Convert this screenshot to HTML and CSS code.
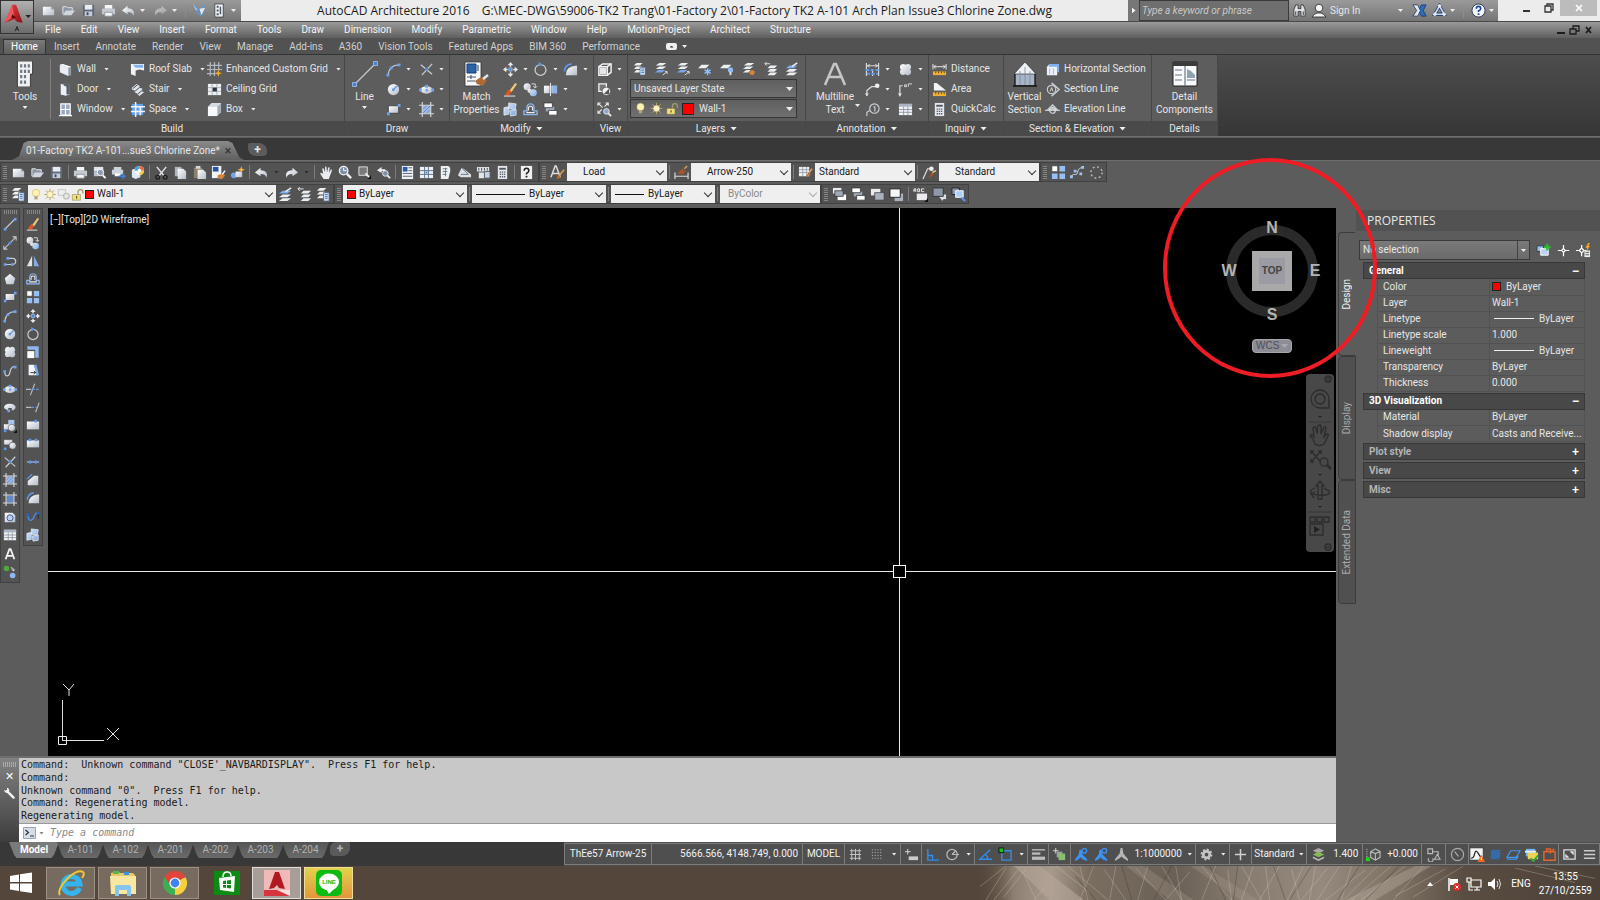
FILE: index.html
```html
<!DOCTYPE html>
<html lang="en">
<head>
<meta charset="utf-8">
<title>AutoCAD Architecture 2016</title>
<link rel="stylesheet" href="styles.css">
</head>
<body>
<svg class="defs" aria-hidden="true">
<defs>
<linearGradient id="gl" x1="0" y1="0" x2="1" y2="1"><stop offset="0" stop-color="#fff"/><stop offset="1" stop-color="#b4bcc8"/></linearGradient>
<linearGradient id="gb" x1="0" y1="0" x2="1" y2="1"><stop offset="0" stop-color="#dbe9fb"/><stop offset="1" stop-color="#7fa9e2"/></linearGradient>
<linearGradient id="gr" x1="0" y1="0" x2="1" y2="1"><stop offset="0" stop-color="#f0444a"/><stop offset="1" stop-color="#8c0d12"/></linearGradient>
</defs>
<symbol id="new" viewBox="0 0 16 16"><path d="M2 4h9l3 3v6H2z" fill="url(#gl)"/><path d="M11 4v3h3z" fill="#8d939b"/></symbol>
<symbol id="open" viewBox="0 0 16 16"><path d="M2 12V4h4l1 1h5v3" fill="#8b95a3" stroke="#e4e8ee"/><path d="M2 13l3-5h10l-4 5z" fill="#cfd6e0"/></symbol>
<symbol id="save" viewBox="0 0 16 16"><path d="M2 2h12v12H2z" fill="#5d6a7c"/><path d="M4 2h8v5H4z" fill="#e9edf2"/><path d="M4 9h8v5H4z" fill="#c5ccd6"/><path d="M6 10h2v3H6z" fill="#3c4656"/></symbol>
<symbol id="print" viewBox="0 0 16 16"><path d="M4 2h8v4H4zM4 10h8v4H4z" fill="#f4f6f8"/><path d="M1 6h14v6H1z" fill="#c3c9d1"/><path d="M4 10h8v4H4z" fill="#f4f6f8" stroke="#6b717a" stroke-width=".6"/></symbol>
<symbol id="preview" viewBox="0 0 16 16"><path d="M2 2h10v5H2z" fill="#dfe4ea"/><path d="M2 7h5v5H2z" fill="#b9c1cc"/><circle cx="9" cy="8" r="3.500" fill="#8fa0b5" stroke="#fff"/><path d="M11.500 11l3 3" stroke="#fff" stroke-width="2"/></symbol>
<symbol id="publish" viewBox="0 0 16 16"><path d="M3 2h8v3H3zM1 5h12v5H1z" fill="#cdd3da"/><path d="M4 9h6v3H4z" fill="#fff"/><path d="M8 12h7m-3-2.500l3 2.500-3 2.500" stroke="#3f7ddc" stroke-width="1.500" fill="none"/></symbol>
<symbol id="threed" viewBox="0 0 16 16"><path d="M2 5l6-2 3 2v8l-5 2-4-2z" fill="#dfe7f0"/><circle cx="10" cy="6" r="5" fill="#f5f7fa"/><path d="M10 1a5 5 0 0 1 5 5h-5z" fill="#e96a3c"/><path d="M15 6a5 5 0 0 1-5 5V6z" fill="#f4c542"/><path d="M5 6a5 5 0 0 1 5-5v5z" fill="#48a0dc"/><circle cx="10" cy="6" r="2" fill="#fff"/></symbol>
<symbol id="cut" viewBox="0 0 16 16"><path d="M3 2l8 10M13 2L5 12" stroke="#dfe3e8" stroke-width="1.500"/><circle cx="4" cy="13" r="2" fill="none" stroke="#1c1c1c" stroke-width="1.400"/><circle cx="12" cy="13" r="2" fill="none" stroke="#1c1c1c" stroke-width="1.400"/></symbol>
<symbol id="copy" viewBox="0 0 16 16"><path d="M2 2h7v10H2z" fill="#aeb5bf"/><path d="M5 4h6l3 3v8H5z" fill="url(#gl)"/></symbol>
<symbol id="paste" viewBox="0 0 16 16"><path d="M2 3h9v11H2z" fill="#8d806d"/><path d="M4 1h5v3H4z" fill="#d4d7db"/><path d="M6 5h6l3 3v7H6z" fill="url(#gl)"/></symbol>
<symbol id="matchs" viewBox="0 0 16 16"><path d="M1 1h10v13H1z" fill="#f2f5f8"/><path d="M2 2h6v5H2z" fill="#28559c"/><path d="M7 11l5-2 3 2-3 4-5-1z" fill="#d9823a"/><path d="M12 10l3-4" stroke="#fff" stroke-width="1.500"/></symbol>
<symbol id="block" viewBox="0 0 16 16"><circle cx="4" cy="11" r="3" fill="#76a4e4"/><path d="M6 7h7v6H6z" fill="url(#gl)"/><path d="M12 1l1 3 3 1-3 1-1 3-1-3-3-1 3-1z" fill="#f6b23c"/></symbol>
<symbol id="undo" viewBox="0 0 16 16"><path d="M7 3L1 8l6 4V9.500c4 0 6 1.500 6 4 2-3 1-8-6-8z" fill="url(#gl)"/></symbol>
<symbol id="redo" viewBox="0 0 16 16"><path d="M9 3l6 5-6 4V9.500c-4 0-6 1.500-6 4-2-3-1-8 6-8z" fill="url(#gl)"/></symbol>
<symbol id="pan" viewBox="0 0 16 16"><path d="M5 15C3 12 1 9 1.500 8.500 2.500 8 4 9 4.500 10L3.500 4c1-1 1.500 0 2 1L6.500 8 6.500 2c1-1 1.500 0 1.600 1L8.500 8 10 2.500c1-.6 1.500.2 1.300 1.200L10.500 8.500 12.500 5c1-.4 1.500.4 1.200 1.200L11.500 12l-1 3z" fill="#e9edf1"/></symbol>
<symbol id="zoom" viewBox="0 0 16 16"><circle cx="6" cy="6" r="4.500" fill="#7d8fa6" stroke="#eef1f4" stroke-width="1.500"/><path d="M6 3v3h3" stroke="#fff" fill="none"/><path d="M9.500 9.500L14 14" stroke="#eef1f4" stroke-width="2.500"/></symbol>
<symbol id="zoomwin" viewBox="0 0 16 16"><path d="M2 2h9v9H2z" fill="#7a7a7a" stroke="#dde1e6"/><path d="M9 9l5 5" stroke="#eee" stroke-width="2"/><path d="M15 11v4h-4z" fill="#111"/></symbol>
<symbol id="zoomprev" viewBox="0 0 16 16"><path d="M6 2L1 5.500l5 3V6.500h4v-2H6z" fill="#e8ecf0"/><circle cx="10" cy="9" r="3" fill="#7d8fa6" stroke="#eee"/><path d="M12 11l3 3" stroke="#eee" stroke-width="2"/></symbol>
<symbol id="props" viewBox="0 0 16 16"><path d="M2 1h12v14H2z" fill="#f0f3f6"/><path d="M3 2h5v5H3z" fill="#2b5aa6"/><path d="M9 3h4M9 6h4M3 9h10M3 12h10" stroke="#56606d"/></symbol>
<symbol id="proj" viewBox="0 0 16 16"><path d="M3 1h9v14H3z" fill="#eef1f4" stroke="#333" stroke-width=".8"/><path d="M5 3h2v2H5zM5 7h2v2H5zM5 11h2v2H5z" fill="#4a5666"/><path d="M9 4v8" stroke="#4a5666" stroke-width="1.500"/></symbol>
<symbol id="dc" viewBox="0 0 16 16"><path d="M1 2h14v12H1z" fill="#edf0f4"/><path d="M6 2v12M10 2v12M1 6h14M1 10h14" stroke="#5b6e8c"/><path d="M7 7h2v2H7z" fill="#4b86d8"/></symbol>
<symbol id="pal" viewBox="0 0 16 16"><path d="M3 1h8l2 2v4l-2 8H3z" fill="#eef1f4"/><path d="M5 4h5M5 7h5M5 10h4M8 3v9" stroke="#6b7683"/></symbol>
<symbol id="sheet" viewBox="0 0 16 16"><path d="M1 11l4-8 2 1 8 6v3H4z" fill="#dde1e7"/><path d="M5 3l7 7H4" stroke="#6b7683" fill="none"/></symbol>
<symbol id="markup" viewBox="0 0 16 16"><path d="M1 2h13v5H1zM3 8h6v6H3z" fill="#e2e6eb"/><path d="M3 3v3M6 3v3M9 3v3M12 3v3" stroke="#3d4652"/><path d="M9 7h6v7H9z" fill="#c8d2de" stroke="#55606e"/></symbol>
<symbol id="calc" viewBox="0 0 16 16"><path d="M3 1h10v14H3z" fill="#e4e7eb"/><path d="M4.500 3h7v2h-7z" fill="#4f5966"/><path d="M5 7.500h6M5 10h6M5 12.500h6" stroke="#59636f" stroke-width="1.400" stroke-dasharray="1.500 .8"/></symbol>
<symbol id="help" viewBox="0 0 16 16"><path d="M2 1h12v14H2z" fill="#f2f2f2"/><path d="M5.500 6q0-2.500 2.500-2.500T10.500 6Q10.500 7.300 8 9v1" stroke="#222" stroke-width="1.600" fill="none"/><path d="M7 11.500h2v1.800H7z" fill="#222"/></symbol>
<symbol id="layerp" viewBox="0 0 16 16"><path d="M4 1h7L8 4H1z" fill="#eef0f3"/><path d="M4 5h6L8 8H1z" fill="#eef0f3"/><path d="M4 9h4v3H1z" fill="#eef0f3"/><path d="M8 6h6v9H8z" fill="#cfe0f6" stroke="#4a5a70" stroke-width=".7"/><path d="M9.500 8h3M9.500 10h3M9.500 12h3" stroke="#3f78c8"/></symbol>
<symbol id="layb" viewBox="0 0 16 16"><path d="M6 1h8l-4 3H2z" fill="#eceff2"/><path d="M6 5h8l-4 3H2z" fill="#eceff2"/><path d="M5 9h8l-4 3H1z" fill="#77a7ea"/><path d="M10 15l5-4m0 0v2.500m0-2.500h-2.500" stroke="#eee" fill="none"/></symbol>
<symbol id="layf" viewBox="0 0 16 16"><path d="M4 3h9l-4 4H0z" fill="#eceff2"/><path d="M11 7v8M7.500 9l7 4M7.500 13l7-4" stroke="#8fc1ff" stroke-width="1.500"/></symbol>
<symbol id="layo" viewBox="0 0 16 16"><path d="M4 3h9l-4 4H0z" fill="#eceff2"/><circle cx="12" cy="9" r="3" fill="#8db9f4"/><path d="M11 11h2v4h-2z" fill="#e3e8ef"/></symbol>
<symbol id="laym" viewBox="0 0 16 16"><path d="M6 1h8l-4 3H2zM5 5h8l-4 3H1zM5 9h5l-3 3H1z" fill="#eceff2"/><path d="M8 11l4-2 3 2-2 4-4-1z" fill="#d9823a"/></symbol>
<symbol id="layv" viewBox="0 0 16 16"><path d="M7 4h8l-3 3H4zM7 8h8l-3 3H4zM7 12h8l-3 3H4z" fill="#eceff2"/><path d="M7 2H1m2-2L1 2l2 2" stroke="#eee" fill="none"/></symbol>
<symbol id="layc" viewBox="0 0 16 16"><path d="M5 4h9l-4 3H1z" fill="#7fb0f0"/><path d="M5 8h9l-4 3H1zM5 12h9l-4 3H1z" fill="#eceff2"/><path d="M8 5l6-4" stroke="#eee" stroke-width="1.500"/></symbol>
<symbol id="bulb" viewBox="0 0 16 16"><circle cx="8" cy="6" r="4.500" fill="#fdf4b4" stroke="#c9a64a" stroke-width=".6"/><path d="M6 10h4v4H6z" fill="#b3a57e"/></symbol>
<symbol id="sun" viewBox="0 0 16 16"><path d="M8 1v14M1 8h14M3 3l10 10M13 3L3 13" stroke="#b8a66c" stroke-width="1.200"/><circle cx="8" cy="8" r="4" fill="#fcf3c2" stroke="#a8924c" stroke-width=".6"/></symbol>
<symbol id="vp" viewBox="0 0 16 16"><path d="M1 2h9v7H1z" fill="none" stroke="#bbb"/><circle cx="11" cy="10" r="3.500" fill="#e6e6e6" stroke="#bbb" stroke-width="1.400"/></symbol>
<symbol id="lock" viewBox="0 0 16 16"><path d="M8 8V5a3 3 0 0 1 6 0v2" fill="none" stroke="#a69a6c" stroke-width="1.500"/><path d="M1 8h10v7H1z" fill="#efe07e" stroke="#7d7340" stroke-width=".6"/><path d="M5.500 10h1.500v3H5.500z" fill="#5d5532"/></symbol>
<symbol id="line" viewBox="0 0 16 16"><path d="M2 14L14 2" stroke="#c6cbd1" stroke-width="1.300"/><path d="M1 12.500h3v3H1zM12.500 1h3v3h-3z" fill="#6ea2ee"/></symbol>
<symbol id="xline" viewBox="0 0 16 16"><path d="M1 15L15 1M1 11v4h4M11 1h4v4" stroke="#c6cbd1" fill="none" stroke-width="1.200"/><path d="M6.500 6.500h3v3h-3z" fill="#4d8df0"/></symbol>
<symbol id="pline" viewBox="0 0 16 16"><path d="M1 12h10a3.500 3.500 0 0 0 0-7H6" stroke="#c6cbd1" fill="none" stroke-width="1.400"/><path d="M1 10.500h3v3H1zM9 10.500h3v3H9zM4 3.500h3v3H4z" fill="#6ea2ee"/></symbol>
<symbol id="poly" viewBox="0 0 16 16"><path d="M8 2l6 5-2 7H4L2 7z" fill="url(#gl)"/></symbol>
<symbol id="rect" viewBox="0 0 16 16"><path d="M2.500 4h11v8h-11z" fill="url(#gl)" stroke="#333" stroke-width=".8"/><path d="M1 11h3v3H1zM12.500 2h3v3h-3z" fill="#6ea2ee"/></symbol>
<symbol id="arc" viewBox="0 0 16 16"><path d="M2 14C3 7 7 3 14 3" stroke="#c6cbd1" fill="none" stroke-width="1.300"/><path d="M.5 12.500h3v3h-3zM4 5h3v3H4zM12.500 1.500h3v3h-3z" fill="#6ea2ee"/></symbol>
<symbol id="circle" viewBox="0 0 16 16"><circle cx="8" cy="8" r="6" fill="url(#gl)"/><path d="M8 8l4-4" stroke="#5c95ea" stroke-width="1.300"/><path d="M6.500 7h2.500v2.500H6.500z" fill="#5c95ea"/></symbol>
<symbol id="cloud" viewBox="0 0 16 16"><path d="M3 3q3-2 5 0 3-2 5 0 2 2.500 0 5 2 3 0 5-2.500 2-5 0-3 1.500-5 0-2-2.500 0-5-2-2.500 0-5z" fill="url(#gl)"/></symbol>
<symbol id="spline" viewBox="0 0 16 16"><path d="M2 9c0 6 5 6 6 0s5-7 6-5" stroke="#c6cbd1" fill="none" stroke-width="1.400"/><path d="M.5 7h3v3h-3zM12.500 2h3v3h-3z" fill="#6ea2ee"/></symbol>
<symbol id="ellipse" viewBox="0 0 16 16"><ellipse cx="8" cy="8.500" rx="6.500" ry="4" fill="url(#gl)"/><path d="M6.500 3h3v3h-3zM0 7h3v3H0zM13 7h3v3h-3zM7 7.500h2.500V10H7z" fill="#6ea2ee"/></symbol>
<symbol id="elarc" viewBox="0 0 16 16"><path d="M2 10a6.500 4 0 1 1 8 2V9H6v3z" fill="url(#gl)"/><path d="M5 11h3v3H5z" fill="#6ea2ee"/></symbol>
<symbol id="insert" viewBox="0 0 16 16"><path d="M6 1h7v9H6z" fill="#a9c6ee"/><path d="M1 6h7v6H1z" fill="url(#gl)"/><circle cx="10" cy="10" r="4" fill="url(#gl)" stroke="#444" stroke-width=".6"/><path d="M1 12h3v3H1z" fill="#5d97ee"/><path d="M16 12v4h-4z" fill="#111"/></symbol>
<symbol id="mkblock" viewBox="0 0 16 16"><path d="M1 3h10v6H1z" fill="url(#gl)" stroke="#444" stroke-width=".6"/><circle cx="11" cy="10" r="4" fill="url(#gl)" stroke="#444" stroke-width=".7"/><path d="M1 12h3v3H1z" fill="#5d97ee"/></symbol>
<symbol id="vstyle" viewBox="0 0 16 16"><path d="M2 2h8v8H2z" fill="#777" stroke="#f2f2f2" stroke-width="1.400"/><circle cx="10" cy="10" r="4.500" fill="#f2f2f2" stroke="#444" stroke-width=".7"/><path d="M7 13l6-6v6z" fill="#555"/></symbol>
<symbol id="point" viewBox="0 0 16 16"><path d="M2 3l12 10M14 2L3 14" stroke="#c6cbd1" stroke-width="1.400"/><path d="M6.500 6h3v3h-3z" fill="#4d8df0"/></symbol>
<symbol id="hatch" viewBox="0 0 16 16"><path d="M4 4h8v8H4z" fill="#9fbdec"/><path d="M4 8l4-4M4 12l8-8M8 12l4-4" stroke="#4c78c0" stroke-width=".8"/><path d="M3.500 0v16M12.500 0v16M0 3.500h16M0 12.500h16" stroke="#d7dbe0" stroke-width="1.200"/></symbol>
<symbol id="grad" viewBox="0 0 16 16"><path d="M4 4h8v8H4z" fill="#6589c4"/><path d="M3.500 0v16M12.500 0v16M0 3.500h16M0 12.500h16" stroke="#d7dbe0" stroke-width="1.200"/></symbol>
<symbol id="region" viewBox="0 0 16 16"><path d="M2 3h9l3 3v8H2z" fill="url(#gl)"/><circle cx="8" cy="9" r="3.500" fill="#b7d1f6" stroke="#33528a"/></symbol>
<symbol id="table" viewBox="0 0 16 16"><path d="M1 2h14v12H1z" fill="#f0f2f5"/><path d="M1 2h14v3H1z" fill="#aab4c2"/><path d="M1 8h14M1 11h14M6 5v9M10.500 5v9" stroke="#7d8794" stroke-width=".8"/></symbol>
<symbol id="bigA" viewBox="0 0 16 16"><path d="M3 14L7.300 2.500h1.400L13 14M5 10h6" fill="none" stroke="#f4f4f4" stroke-width="2"/></symbol>
<symbol id="addsel" viewBox="0 0 16 16"><circle cx="4" cy="4" r="3.200" fill="#4fa83b"/><circle cx="11" cy="12" r="3.200" fill="#8cb8f4"/><path d="M9 3q3 0 3 3m-2-1l2 2 1-2" stroke="#eee" fill="none"/></symbol>
<symbol id="erase" viewBox="0 0 16 16"><path d="M7 9l6-8 2 1-6 9z" fill="#f0c67a"/><path d="M3 12l3-4 3 2-2 4-4 1z" fill="#e0561b"/><path d="M1 15h12" stroke="#eee"/></symbol>
<symbol id="copyo" viewBox="0 0 16 16"><circle cx="4.500" cy="5" r="3.800" fill="url(#gl)"/><circle cx="11" cy="11.500" r="3.800" fill="url(#gb)"/><circle cx="7" cy="9.500" r="2.200" fill="url(#gl)"/><path d="M9 2h4v4m-2-1.500l2 2 2-2" stroke="#ddd" fill="none"/></symbol>
<symbol id="mirror" viewBox="0 0 16 16"><path d="M7 2v12H1z" fill="#e0e4ea"/><path d="M9 2v12h6z" fill="#86abe0"/></symbol>
<symbol id="offset" viewBox="0 0 16 16"><path d="M1 13.500h14v-4h-3.500Q13 2 8 2T4.500 9.500H1z" fill="none" stroke="#8db7f4" stroke-width="1.400"/><path d="M3.500 11.300h9M6 9Q5 4.500 8 4.500T10 9" fill="none" stroke="#eee" stroke-width="1.200"/></symbol>
<symbol id="array" viewBox="0 0 16 16"><path d="M1 1h6v6H1z" fill="#fff" stroke="#444" stroke-width=".6"/><path d="M9 1h6v6H9zM1 9h6v6H1zM9 9h6v6H9z" fill="#98bff5"/></symbol>
<symbol id="move" viewBox="0 0 16 16"><path d="M8 0l3 3.500H5zM8 16l3-3.500H5zM0 8l3.500-3v6zM16 8l-3.500-3v6z" fill="#e6e9ed"/><path d="M6.300 6.300h3.400v3.400H6.300z" fill="#3f86ee" stroke="#cfe0fa" stroke-width=".6"/><path d="M8 3v2M8 11v2M3 8h2M11 8h2" stroke="#e6e9ed" stroke-width="1.600"/></symbol>
<symbol id="rotate" viewBox="0 0 16 16"><circle cx="8" cy="8.500" r="5.800" fill="none" stroke="#c6cbd1" stroke-width="1.400"/><path d="M6 0l4 2.500L6 5z" fill="#5c97f0"/></symbol>
<symbol id="scale" viewBox="0 0 16 16"><path d="M1.500 1.500h13v13h-4v-9h-9z" fill="#8fb6ee"/><path d="M1.500 7h8v8h-8z" fill="#fff"/></symbol>
<symbol id="stretch" viewBox="0 0 16 16"><path d="M3 2h6l4 12H3z" fill="#f1f4f8"/><path d="M9 2h3l3 12h-3z" fill="#79a6e6"/><path d="M5 11h6m-2-2l2 2-2 2" stroke="#222" fill="none"/></symbol>
<symbol id="trim" viewBox="0 0 16 16"><path d="M0 8.500h6M10 2L5 15" stroke="#b6bcc4" stroke-width="1.300"/><path d="M7 8.500h9" stroke="#5f98f0" stroke-width="1.300" stroke-dasharray="3 1.500"/></symbol>
<symbol id="extend" viewBox="0 0 16 16"><path d="M0 8.500h6M15 3l-4 11" stroke="#b6bcc4" stroke-width="1.300"/><path d="M6 8.500h6" stroke="#5f98f0" stroke-width="1.300" stroke-dasharray="3 1.500"/></symbol>
<symbol id="break1" viewBox="0 0 16 16"><path d="M1 4h14v9H1z" fill="url(#gl)"/><path d="M9.500 2h3v3h-3z" fill="#5f98f0"/></symbol>
<symbol id="break2" viewBox="0 0 16 16"><path d="M1 5h14v8H1z" fill="url(#gl)"/><path d="M3 3h3v3H3zM10 3h3v3h-3z" fill="#5f98f0"/></symbol>
<symbol id="join" viewBox="0 0 16 16"><path d="M1 8h14" stroke="#b6bcc4" stroke-width="1.300"/><path d="M4 5.500L8 8l-4 2.500zM12 5.500L8 8l4 2.500z" fill="#5f98f0"/></symbol>
<symbol id="chamfer" viewBox="0 0 16 16"><path d="M2 9l7-6h5v11H2z" fill="url(#gl)"/><path d="M1 7l6-5.500" stroke="#5f98f0" stroke-width="1.500"/></symbol>
<symbol id="fillet" viewBox="0 0 16 16"><path d="M3 14q0-9 10-10h2v10z" fill="url(#gl)"/><path d="M1.500 10Q2 3 9 2" stroke="#5f98f0" stroke-width="1.700" fill="none"/></symbol>
<symbol id="blend" viewBox="0 0 16 16"><path d="M2 6c1 8 5 7 7 2s3-5 6-4" stroke="#4b8df0" fill="none" stroke-width="1.500"/><path d="M.5 4h3v3h-3zM12.500 2h3v3h-3z" fill="#2a5fc0"/><path d="M14 5v5" stroke="#223"/></symbol>
<symbol id="explode" viewBox="0 0 16 16"><path d="M6 1l8 1-1 6-7-1zM1 6l5-1v8l-5 1zM7 9l7-1v6l-6 1z" fill="url(#gb)" stroke="#e8edf4" stroke-width=".8"/></symbol>
<symbol id="align" viewBox="0 0 16 16"><path d="M1 4h6v8H1zM9 4h6v8H9z" fill="url(#gl)"/><path d="M10 4h5v8h-5z" fill="#8bb3ee"/><path d="M8 1v14" stroke="#eee"/></symbol>
<symbol id="order1" viewBox="0 0 16 16"><path d="M1 1h9v6H1z" fill="#e9ebee"/><path d="M6 8h9v6H6z" fill="#fff"/><path d="M3 4h9v6H3z" fill="#9fa9b8" stroke="#333" stroke-width=".8"/></symbol>
<symbol id="order2" viewBox="0 0 16 16"><path d="M3 5h9v5H3z" fill="#9fa9b8"/><path d="M1 1h9v5H1zM6 9h9v5H6z" fill="#fff" stroke="#333" stroke-width=".8"/></symbol>
<symbol id="order3" viewBox="0 0 16 16"><path d="M1 2h10v7H1z" fill="#e9ebee"/><path d="M5 6h10v8H5z" fill="#a9b2be" stroke="#444" stroke-width=".8"/></symbol>
<symbol id="order4" viewBox="0 0 16 16"><path d="M6 7h9v8H6z" fill="#a9b2be"/><path d="M1 2h11v9H1z" fill="#f5f6f8" stroke="#222"/></symbol>
<symbol id="abc" viewBox="0 0 16 16"><path d="M4 7h11v7H4z" fill="#e9ebee"/><path d="M1 5V2h2v3M1 4h2M5 5V2h2v3zM9 2h3M9 2v3h3" stroke="#eee" fill="none"/><path d="M16 12v4h-4z" fill="#111"/></symbol>
<symbol id="order5" viewBox="0 0 16 16"><path d="M6 8h9v5q-4-1-4 2z" fill="#dde0e4"/><path d="M1 1h11v9H1z" fill="#8e98a8" stroke="#333"/></symbol>
<symbol id="order6" viewBox="0 0 16 16"><path d="M1 1h8v7H1z" fill="#8e98a8" stroke="#222"/><path d="M5 4h8v7H5z" fill="#a8d1f7" stroke="#fff"/><path d="M11 11l4 4" stroke="#5f98f0" stroke-width="2"/></symbol>
<symbol id="wall" viewBox="0 0 16 16"><path d="M2 3l3-1 9 3v9l-3 1-9-4z" fill="#8e99a7"/><path d="M2 3l9 3v9l-9-4z" fill="#e9edf2"/><path d="M2 3l3-1 9 3-3 1z" fill="#fff"/></symbol>
<symbol id="door" viewBox="0 0 16 16"><path d="M3 2h9v12H3z" fill="#a8b6c8"/><path d="M6 2h6v11H6z" fill="#59616c"/><path d="M3 2l6 3v10l-6-2z" fill="#edf1f5"/></symbol>
<symbol id="window" viewBox="0 0 16 16"><path d="M3 2h10v12H3z" fill="#97a7bd" stroke="#fff" stroke-width="1.300"/><path d="M8 2v12M3 8h10M1 14.500h14" stroke="#fff" stroke-width="1.300"/></symbol>
<symbol id="roof" viewBox="0 0 16 16"><path d="M1 2h14v7l-5-1-4 1v6l-5-2z" fill="#f0f3f7"/><path d="M3 3h11v3H6z" fill="#80b0f0"/></symbol>
<symbol id="stair" viewBox="0 0 16 16"><path d="M2 6l5-4 3 2v2l3 1v3l2 1-5 4-3-3-2-1V9L2 8z" fill="#dfe4ea"/><path d="M3 7l5-4M5 10l5-4M8 13l5-4" stroke="#3d4550"/></symbol>
<symbol id="space" viewBox="0 0 16 16"><path d="M2 2h12v12H2z" fill="#62a1ee"/><path d="M6 0v16M1 5h15M1 10h15M11 5v9" stroke="#f0f4f8" stroke-width="1.600"/></symbol>
<symbol id="ecg" viewBox="0 0 16 16"><path d="M3.500 0v15M8 0v15M12.500 0v9M0 3.500h16M0 8h16M0 12.500h9" stroke="#b3b8bf" stroke-width="1.300"/><path d="M12 8l1 3 3 1-3 1-1 3-1-3-3-1 3-1z" fill="#f7a823"/></symbol>
<symbol id="ceil" viewBox="0 0 16 16"><path d="M1 2h14v12H1z" fill="#eef0f3"/><path d="M5.500 2v12M10.500 2v12M1 6h14M1 10h14" stroke="#aab0b8"/><path d="M6 6h4.500v4H6z" fill="#2e343c"/></symbol>
<symbol id="box" viewBox="0 0 16 16"><path d="M1 5l4-4h10v10l-4 4H1z" fill="#a5afbb"/><path d="M1 5l4-4h10l-4 4z" fill="#d6dce3"/><path d="M1 5h10v10H1z" fill="#f7f9fa"/></symbol>
<symbol id="boxv" viewBox="0 0 16 16"><path d="M2 5l4-3h9v9l-4 3H2z" fill="#555" stroke="#f2f2f2" stroke-width="1.600"/><path d="M2 5h9v9M11 5l4-3" fill="none" stroke="#f2f2f2" stroke-width="1.600"/><path d="M3 6h7v7H3z" fill="#e3e6ea"/></symbol>
<symbol id="zext" viewBox="0 0 16 16"><path d="M1 1l5 5M12 1L8 5M1 12l4-4M1 4V1h3M9 1h3v3M1 9v3h3" stroke="#e6e6e6" fill="none" stroke-width="1.200"/><circle cx="10" cy="10" r="3" fill="#8fa8c8" stroke="#e6e6e6"/><path d="M12 12l3 3" stroke="#e6e6e6" stroke-width="2"/></symbol>
<symbol id="dim" viewBox="0 0 16 16"><path d="M1.500 1v14M14.500 1v14M8 9v6" stroke="#ddd" stroke-width="1.200"/><path d="M2 4h12M5 2.500L2.500 4 5 5.500M11 2.500L13.500 4 11 5.500" stroke="#ddd" fill="none"/><path d="M1 8.500h14M2 12.500h12" stroke="#5c97f0" stroke-width="2" stroke-dasharray="3.500 1.500"/></symbol>
<symbol id="leader" viewBox="0 0 16 16"><path d="M2 15V9l5-4h4" stroke="#d8dbe0" fill="none" stroke-width="1.300"/><circle cx="13" cy="4" r="2.500" fill="#eee"/><path d="M0 12l2 3.500 2-3.500z" fill="#ddd"/></symbol>
<symbol id="leader2" viewBox="0 0 16 16"><path d="M2 15V4h3" stroke="#d8dbe0" fill="none" stroke-width="1.300"/><path d="M7 5V3h2v2zM11 5V2h4" stroke="#ddd" fill="none"/><path d="M0 12l2 4 2-4z" fill="#ddd"/></symbol>
<symbol id="tag" viewBox="0 0 16 16"><circle cx="10" cy="7" r="5" fill="none" stroke="#cfd3d8" stroke-width="1.200"/><path d="M2 15v-4l3-2M9 5h1.500v5" stroke="#cfd3d8" fill="none" stroke-width="1.200"/></symbol>
<symbol id="dist" viewBox="0 0 16 16"><path d="M1 2v6M15 2v6M2 5h12M4 3L2 5l2 2M12 3l2 2-2 2" stroke="#eee" fill="none"/><path d="M1 10h14v4H1z" fill="#f2b334"/><path d="M4 10v2M7 10v2M10 10v2M13 10v2" stroke="#554215"/></symbol>
<symbol id="area" viewBox="0 0 16 16"><path d="M2 1h3l10 8H2z" fill="#f1f4f6"/><path d="M1 11h14v4H1z" fill="#f2b334"/><path d="M4 11v2M7 11v2M10 11v2M13 11v2" stroke="#554215"/></symbol>
<symbol id="hsec" viewBox="0 0 16 16"><path d="M2 5l3-3h10l-2 3v9H2z" fill="#edf1f5"/><path d="M5 2h10v9h-2V5H4z" fill="#7fb1f2"/><path d="M5 7v6M9 7v6" stroke="#9db9dd"/></symbol>
<symbol id="secl" viewBox="0 0 16 16"><circle cx="7" cy="8" r="4.500" fill="none" stroke="#c6cbd1" stroke-width="1.300"/><path d="M7 1l8 7-8 7" fill="none" stroke="#c6cbd1" stroke-width="1.600"/><path d="M5.500 10L7 6l1.500 4" stroke="#ddd" fill="none"/></symbol>
<symbol id="elvl" viewBox="0 0 16 16"><path d="M0 9h16M8 3l5 5H3z" stroke="#c6cbd1" fill="#888" stroke-width="1.400"/><circle cx="8" cy="9" r="3" fill="none" stroke="#ddd" stroke-width="1.200"/></symbol>
<symbol id="txst" viewBox="0 0 16 16"><path d="M1 13L5.500 1h1L11 13M3 9h6" fill="none" stroke="#ddd" stroke-width="1.600"/><path d="M10 11l5-6" stroke="#e9a24a" stroke-width="1.500"/><path d="M7 15l2-5 3 3z" fill="#c5702e"/></symbol>
<symbol id="dimst" viewBox="0 0 16 16"><path d="M1 8v7M15 8v7M1 12h14" stroke="#ddd" stroke-width="1.200"/><path d="M3 9l6-5 4 3-4 3z" fill="#a4552a"/><path d="M11 4l3-3" stroke="#d9a066" stroke-width="1.500"/></symbol>
<symbol id="tbst" viewBox="0 0 16 16"><path d="M1 2h11v10H1z" fill="#eee"/><path d="M1 5h11M1 8h11M5 2v10M9 2v10" stroke="#8d97a4" stroke-width=".8"/><path d="M8 13l3-5 3 2z" fill="#c5702e"/><path d="M12 8l3-4" stroke="#e9a24a" stroke-width="1.500"/></symbol>
<symbol id="mlst" viewBox="0 0 16 16"><path d="M1 15l5-11h3" fill="none" stroke="#ddd" stroke-width="1.300"/><circle cx="10" cy="4" r="2.500" fill="#eee"/><path d="M7 14l3-6 3 2z" fill="#a4552a"/><path d="M11 8l4-2" stroke="#f1c285" stroke-width="1.500"/></symbol>
<symbol id="conv" viewBox="0 0 16 16"><path d="M2 13c0-6 5 0 6-5s3-5 6-5" stroke="#ddd" fill="none"/><path d="M0 11h3v3H0zM12 1h3v3h-3zM10 8h3v3h-3zM4 5h3v3H4z" fill="#9cc0f4"/></symbol>
<symbol id="dots" viewBox="0 0 16 16"><circle cx="8" cy="8" r="6" fill="none" stroke="#bbb" stroke-width="1.500" stroke-dasharray="2 2.700"/></symbol>
<symbol id="ws" viewBox="0 0 16 16"><path d="M2 3l6 5 6-6M4 8l5 5 4-5" stroke="#5599dd" fill="none" stroke-width="1.500"/><path d="M8 6l2 7 4-8z" fill="#dfe6ee"/><path d="M1 1l5 7-2-1z" fill="#eee"/></symbol>
<symbol id="bldg" viewBox="0 0 16 24"><path d="M1 0h14v12h-2v12H1z" fill="#f0f2f4" stroke="#303030" stroke-width=".8"/><path d="M3.500 3h2v3h-2zM7 3h2v3H7zM10.500 3h2v3h-2zM3.500 8h2v3h-2zM7 8h2v3H7zM10.500 8h2v3h-2zM3.500 13h2v3h-2zM7 13h2v3H7zM3.500 18h2v3h-2zM7 18h2v3H7z" fill="#6f7780"/></symbol>
<symbol id="bigline" viewBox="0 0 26 26"><path d="M2 24L24 2" stroke="#c2c6cb" stroke-width="1.200"/><path d="M.5 21.500h4v4h-4zM21.500.5h4v4h-4z" fill="#4b80cc" stroke="#9cc1f5" stroke-width=".8"/></symbol>
<symbol id="match" viewBox="0 0 26 26"><path d="M1 1h16v24H1z" fill="#f7f8fa" stroke="#333" stroke-width=".8"/><path d="M3 3h9v9H3z" fill="#2a63a8" stroke="#123b70"/><path d="M14 4v6M3 16h9M7 14v4M3 20h8" stroke="#4a5a6c" stroke-width="1.200"/><path d="M11 20l6-4 6 3-4 6-6-2z" fill="#b06a33"/><path d="M19 18l5-4" stroke="#e6e6e6" stroke-width="2.500"/></symbol>
<symbol id="hugeA" viewBox="0 0 26 26"><path d="M3 24L12 3h2l9 21M7 16h12" fill="none" stroke="#c5c5c5" stroke-width="2.600"/></symbol>
<symbol id="house" viewBox="0 0 26 26"><path d="M3 13h20v11H3z" fill="#a7b3c6"/><path d="M13 1l11 12H2z" fill="#eef1f5" stroke="#333" stroke-width=".7"/><path d="M13 6v18M8 10v14M18 10v14" stroke="#7c889b" stroke-width=".8"/><path d="M1 25h24M3 13v12M23 13v12" stroke="#151515" stroke-width="1.300"/></symbol>
<symbol id="detail" viewBox="0 0 26 26"><path d="M1 1h24v24H1z" fill="#f8f9fa" stroke="#222"/><path d="M1 1h24v4H1z" fill="#3b3b3b"/><path d="M13 5v20M3 9h7M3 14h7M3 19h7M15 19h8" stroke="#6a7888" stroke-width="1.200"/><path d="M15 8l4 2 4 4v3h-8z" fill="#8fa2b0"/></symbol>
<symbol id="bino" viewBox="0 0 16 16"><path d="M2 7l2-5h2.500v4h3V2H12l2 5v7H9.500V9h-3v5H2z" fill="#dfe2e6" stroke="#333" stroke-width=".9"/><path d="M4 9v4M12 9v4" stroke="#333"/></symbol>
<symbol id="user" viewBox="0 0 16 16"><circle cx="8" cy="5" r="3.800" fill="#f5f6f8" stroke="#333" stroke-width=".9"/><path d="M1 14q2-3 5-4h4q3 1 5 4z" fill="#f5f6f8" stroke="#333" stroke-width=".9"/></symbol>
<symbol id="exch" viewBox="0 0 16 16"><path d="M15 2h-5L7 8l3 6h5l-3-6z" fill="#2d6cc4" stroke="#1d2f55" stroke-width=".8"/><path d="M1 2h5l3 6-3 6H1l4-6z" fill="#dfe8f5" stroke="#1d2f55" stroke-width=".8"/></symbol>
<symbol id="a360" viewBox="0 0 16 16"><path d="M8 3L3 12h10z" fill="none" stroke="#27406e" stroke-width="3.500"/><path d="M8 3L3 12h10z" fill="none" stroke="#c9d6ea" stroke-width="1.800"/><circle cx="8" cy="3" r="1.800" fill="#e6ecf6"/><circle cx="3" cy="12" r="1.800" fill="#e6ecf6"/><circle cx="13" cy="12" r="1.800" fill="#e6ecf6"/></symbol>
<symbol id="qhelp" viewBox="0 0 16 16"><circle cx="8" cy="8" r="7" fill="#f4f6fa" stroke="#2a3550"/><path d="M5.700 6q0-2.400 2.300-2.400T10.300 6Q10.300 7.300 8 8.600v1" stroke="#1b3f9c" stroke-width="1.700" fill="none"/><path d="M7.100 11h1.900v1.800H7.100z" fill="#1b3f9c"/></symbol>
<symbol id="grid" viewBox="0 0 16 16"><path d="M4 2v12M8 2v12M12 2v12M2 4h12M2 8h12M2 12h12" stroke="#c9c9c9"/></symbol>
<symbol id="snap" viewBox="0 0 16 16"><path d="M2 3h12M2 6h12M2 9h12M2 12h12" stroke="#c9c9c9" stroke-dasharray="1 2"/></symbol>
<symbol id="dyn" viewBox="0 0 16 16"><path d="M1 5h6M4 2v6" stroke="#ddd"/><path d="M5 10h10v4H5z" fill="#ccc"/></symbol>
<symbol id="ortho" viewBox="0 0 16 16"><path d="M3 2v12h12M3 9h5v5" stroke="#2f8cf0" fill="none" stroke-width="1.500"/></symbol>
<symbol id="polar" viewBox="0 0 16 16"><circle cx="7.500" cy="8" r="5.500" fill="none" stroke="#bbb" stroke-width="1.300"/><path d="M7.500 8H15M7.500 8l4-4" stroke="#bbb" stroke-width="1.300"/></symbol>
<symbol id="otrack" viewBox="0 0 16 16"><path d="M13 3L2 13h13M8 8q3 2 2 5" stroke="#2f8cf0" fill="none" stroke-width="1.500"/></symbol>
<symbol id="osnap" viewBox="0 0 16 16"><path d="M4 4h10v10H4z" stroke="#2f8cf0" fill="none" stroke-width="1.500"/><path d="M1 1h5v5H1z" fill="#19c319" stroke="#111"/></symbol>
<symbol id="lwt" viewBox="0 0 16 16"><path d="M1 3h14" stroke="#bbb" stroke-width="1.500"/><path d="M1 7h9" stroke="#bbb" stroke-width="2.500"/><path d="M1 12h14" stroke="#bbb" stroke-width="3.500"/></symbol>
<symbol id="selc" viewBox="0 0 16 16"><path d="M1 4h6M4 1v6" stroke="#ddd"/><path d="M5 5h6v6H5z" fill="#a3a3a3"/><path d="M7 7h7v7H7z" fill="#86c06c"/></symbol>
<symbol id="ann" viewBox="0 0 16 16"><path d="M7 1h2l1 6 5 6v2l-5-3-2-2-2 2-5 3v-2l5-6z" fill="currentColor"/></symbol>
<symbol id="annv" viewBox="0 0 16 16"><path d="M6 3h2l1 5 5 5v2l-5-2-2-2-2 2-4 2v-2l4-5z" fill="currentColor"/><circle cx="11" cy="4" r="2.500" fill="none" stroke="currentColor" stroke-width="1.400"/></symbol>
<symbol id="gear" viewBox="0 0 16 16"><circle cx="8" cy="8" r="3.500" fill="none" stroke="#c4c4c4" stroke-width="3"/><circle cx="8" cy="8" r="5.300" fill="none" stroke="#c4c4c4" stroke-width="2" stroke-dasharray="2.100 2"/></symbol>
<symbol id="cross" viewBox="0 0 16 16"><path d="M8 2v12M2 8h12" stroke="#d0d0d0" stroke-width="1.600"/></symbol>
<symbol id="cutp" viewBox="0 0 16 16"><path d="M8 1l6 3-6 3-6-3z" fill="#aaa"/><path d="M8 5l6 3-6 3-6-3z" fill="#86bb54"/><path d="M2 10l6 3 6-3v2l-6 3-6-3z" fill="#bbb"/></symbol>
<symbol id="elev" viewBox="0 0 16 16"><path d="M5 5l5-3 5 3v6l-5 3-5-3zM5 5l5 2 5-2M10 7v7" fill="none" stroke="#bbb" stroke-width="1.200"/><path d="M1 2v9" stroke="#ccc" stroke-dasharray="1 1.500"/><path d="M0 11h4v4H0z" fill="#1bdc1b"/></symbol>
<symbol id="iso" viewBox="0 0 16 16"><path d="M2 2h5v5H2zM3 12a2.500 2.500 0 1 0 4 0M9 13l3-5 3 5zM7 5h6v4" fill="none" stroke="#bbb" stroke-width="1.200"/></symbol>
<symbol id="hw" viewBox="0 0 16 16"><circle cx="8" cy="8" r="6.500" fill="none" stroke="#aaa" stroke-width="1.300"/><path d="M5 5l4 5" stroke="#aaa" stroke-width="1.300"/></symbol>
<symbol id="wave" viewBox="0 0 16 16"><path d="M0 1h14v13H0z" fill="#f4f4f4" stroke="#222" stroke-width=".6"/><path d="M1 12q3 0 4-5t4 0 3 5" stroke="#222" fill="none" stroke-width="1.300"/><path d="M12 8l4 8H8z" fill="#ec6a1c"/><path d="M12 11v3" stroke="#fff"/></symbol>
<symbol id="bluebox" viewBox="0 0 16 16"><path d="M3 3h10v10H3z" fill="#315f98"/><path d="M3 7l4-4M3 10l7-7M3 13L13 3M6 13l7-7M9 13l4-4" stroke="#4488d0" stroke-width=".8"/></symbol>
<symbol id="plane" viewBox="0 0 16 16"><path d="M1 11l4-7h10l-4 7zM1 13h10l2-3" fill="none" stroke="#4296ec" stroke-width="1.300"/></symbol>
<symbol id="trust" viewBox="0 0 16 16"><path d="M2 2h10v8H2z" fill="#7ab4ee"/><path d="M4 6h11v7H4z" fill="#f0d256"/><path d="M1 4h12v2H1z" fill="#eee"/><path d="M7 12l3 3 5-6" fill="none" stroke="#35a83a" stroke-width="2"/></symbol>
<symbol id="opack" viewBox="0 0 16 16"><path d="M2 5h12v9H2zM5 5V2h4v5M10 5l3-3" fill="none" stroke="#e0662a" stroke-width="1.600"/></symbol>
<symbol id="clean" viewBox="0 0 16 16"><path d="M2 3h12v10H2z" fill="none" stroke="#ddd" stroke-width="1.400"/><path d="M9 5h3v3zM4 11V8l3 3z" fill="#ddd" stroke="#ddd"/></symbol>
<symbol id="burger" viewBox="0 0 16 16"><path d="M2 4h12M2 8h12M2 12h12" stroke="#ccc" stroke-width="1.800"/></symbol>
<symbol id="qsel" viewBox="0 0 16 16"><path d="M1 3h7v6H1z" fill="#9dbbe6" stroke="#2c3e5c"/><path d="M5 6h8v7H5z" fill="#b9d2f4" stroke="#fff"/><path d="M12 1v7M8.500 4.500h7" stroke="#28c12c" stroke-width="2.200"/></symbol>
<symbol id="pick" viewBox="0 0 16 16"><path d="M8 2v4M8 10v4M2 8h4M10 8h4" stroke="#fff" stroke-width="1.300"/><path d="M6 8l2-2 2 2-2 2z" fill="none" stroke="#fff" stroke-width="1.300"/></symbol>
<symbol id="pick2" viewBox="0 0 16 16"><path d="M6 2v4M6 10v4M0 8h3M9 8h2" stroke="#fff" stroke-width="1.300"/><path d="M3.500 8L6 5.500 8.500 8 6 10.500z" fill="none" stroke="#fff" stroke-width="1.300"/><path d="M13 0l-3 5h2l-1 4 4-6h-2l2-3z" fill="#f5a623"/><path d="M9 8h6v7H9z" fill="#eee"/><path d="M10 10h4M10 12.500h4" stroke="#555"/></symbol>
<symbol id="wrench" viewBox="0 0 16 16"><path d="M5 5l8 8" stroke="#f2f2f2" stroke-width="3" stroke-linecap="round"/><path d="M1.500 3A3.500 3.500 0 0 0 7 6.500 3.500 3.500 0 0 0 5 1v3l-2 .5z" fill="#f2f2f2"/></symbol>
</svg>

<header class="titlebar">
  <button class="appbtn" aria-label="Application menu"><svg viewBox="0 0 34 34"><path d="M4 23L12 4h4l7 19-6-1-3-3-4 2z" fill="url(#gr)"/><path d="M12 4l2 12-10 7z" fill="#f0555a"/><path d="M12 14l4 4h-5z" fill="#5a0508"/><path d="M26 15h6l-3 3z" fill="#222"/><path d="M15 32l2-5 2 5m-3-2h2" stroke="#222" fill="none"/></svg></button>
  <div class="qat">
    <button class="b" aria-label="New"><svg><use href="#new"/></svg></button>
    <button class="b" aria-label="Open"><svg><use href="#open"/></svg></button>
    <button class="b" aria-label="Save"><svg><use href="#save"/></svg></button>
    <button class="b" aria-label="Plot"><svg><use href="#print"/></svg></button>
    <button class="b" aria-label="Undo"><svg><use href="#undo"/></svg></button><i class="c wide"></i>
    <button class="b dim" aria-label="Redo"><svg><use href="#redo"/></svg></button><i class="c wide"></i>
    <i class="sep"></i>
    <button class="b" aria-label="Workspace"><svg><use href="#ws"/></svg></button>
    <button class="b" aria-label="Project"><svg><use href="#proj"/></svg></button>
    <i class="c wide more"></i>
  </div>
  <h1><span>AutoCAD Architecture 2016</span><span>G:\MEC-DWG\59006-TK2 Trang\01-Factory 2\01-Factory TK2 A-101 Arch Plan Issue3 Chlorine Zone.dwg</span></h1>
  <button class="expand" aria-label="Expand search"><i></i></button>
  <input class="search" aria-label="Search" placeholder="Type a keyword or phrase">
  <div class="info">
    <button class="b" aria-label="Find"><svg><use href="#bino"/></svg></button>
    <button class="signin"><svg><use href="#user"/></svg><span>Sign In</span><i class="c"></i></button>
    <button class="b" aria-label="Exchange"><svg><use href="#exch"/></svg></button>
    <button class="b" aria-label="A360"><svg><use href="#a360"/></svg></button><i class="c wide"></i>
    <i class="sep"></i>
    <button class="b" aria-label="Help"><svg><use href="#qhelp"/></svg></button><i class="c wide"></i>
  </div>
  <div class="winbtns">
    <button aria-label="Minimize"><svg viewBox="0 0 12 12"><path d="M2 8h7v2H2z" fill="#333"/></svg></button>
    <button aria-label="Restore"><svg viewBox="0 0 12 12"><path d="M2 4h6v6H2zM4 4V2h6v6H8" fill="none" stroke="#333" stroke-width="1.300"/></svg></button>
    <button class="x" aria-label="Close"><svg viewBox="0 0 12 12"><path d="M3 3l6 6M9 3L3 9" stroke="#fff" stroke-width="1.600"/></svg></button>
  </div>
</header>

<nav class="menubar">
  <a href="#">File</a><a href="#">Edit</a><a href="#">View</a><a href="#">Insert</a><a href="#">Format</a><a href="#">Tools</a><a href="#">Draw</a><a href="#">Dimension</a><a href="#">Modify</a><a href="#">Parametric</a><a href="#">Window</a><a href="#">Help</a><a href="#">MotionProject</a><a href="#">Architect</a><a href="#">Structure</a>
  <svg class="mdi" viewBox="0 0 40 12"><path d="M2 8h8v2H2z" fill="#1c1c1c"/><path d="M15 5h6v5h-6zM18 5V2h6v5h-3" fill="none" stroke="#1c1c1c" stroke-width="1.300"/><path d="M31 3l5 6M36 3l-5 6" stroke="#1c1c1c" stroke-width="1.800"/></svg>
</nav>

<nav class="tabs">
  <a class="on" href="#">Home</a><a href="#">Insert</a><a href="#">Annotate</a><a href="#">Render</a><a href="#">View</a><a href="#">Manage</a><a href="#">Add-ins</a><a href="#">A360</a><a href="#">Vision Tools</a><a href="#">Featured Apps</a><a href="#">BIM 360</a><a href="#">Performance</a>
  <button class="ribmin" aria-label="Minimize ribbon"><i></i></button><i class="c"></i>
</nav>

<section class="ribbon">
  <div class="panel build">
    <div class="body">
      <button class="big"><svg class="tall"><use href="#bldg"/></svg><span>Tools</span><i class="c"></i></button>
      <i class="vsep"></i>
      <div class="cols">
        <button class="rb"><svg><use href="#wall"/></svg>Wall<i class="c"></i></button>
        <button class="rb"><svg><use href="#roof"/></svg>Roof Slab<i class="c"></i></button>
        <button class="rb"><svg><use href="#ecg"/></svg>Enhanced Custom Grid<i class="c"></i></button>
        <button class="rb"><svg><use href="#door"/></svg>Door<i class="c"></i></button>
        <button class="rb"><svg><use href="#stair"/></svg>Stair<i class="c"></i></button>
        <button class="rb"><svg><use href="#ceil"/></svg>Ceiling Grid</button>
        <button class="rb"><svg><use href="#window"/></svg>Window<i class="c"></i></button>
        <button class="rb"><svg><use href="#space"/></svg>Space<i class="c"></i></button>
        <button class="rb"><svg><use href="#box"/></svg>Box<i class="c"></i></button>
      </div>
    </div>
    <h2>Build</h2>
  </div>
  <div class="panel draw">
    <div class="body">
      <button class="big"><svg><use href="#bigline"/></svg><span>Line</span><i class="c"></i></button>
      <div class="cols">
        <button class="sp" aria-label="Arc"><svg><use href="#arc"/></svg><i class="c"></i></button>
        <button class="sp" aria-label="Point"><svg><use href="#point"/></svg><i class="c"></i></button>
        <button class="sp" aria-label="Circle"><svg><use href="#circle"/></svg><i class="c"></i></button>
        <button class="sp" aria-label="Ellipse"><svg><use href="#ellipse"/></svg><i class="c"></i></button>
        <button class="sp" aria-label="Rectangle"><svg><use href="#rect"/></svg><i class="c"></i></button>
        <button class="sp" aria-label="Hatch"><svg><use href="#hatch"/></svg><i class="c"></i></button>
      </div>
    </div>
    <h2>Draw</h2>
  </div>
  <div class="panel modify">
    <div class="body">
      <button class="big"><svg><use href="#match"/></svg><span>Match<br>Properties</span></button>
      <div class="rows">
        <div class="spread"><button class="sp" aria-label="Move"><svg><use href="#move"/></svg><i class="c"></i></button><button class="sp" aria-label="Rotate"><svg><use href="#rotate"/></svg><i class="c"></i></button><button class="sp" aria-label="Fillet"><svg><use href="#fillet"/></svg><i class="c"></i></button></div>
        <div><button class="sp one" aria-label="Erase"><svg><use href="#erase"/></svg></button><button class="sp one" aria-label="Copy"><svg><use href="#copyo"/></svg></button><button class="sp" aria-label="Align"><svg><use href="#align"/></svg><i class="c"></i></button></div>
        <div><button class="sp one" aria-label="Explode"><svg><use href="#explode"/></svg></button><button class="sp one" aria-label="Offset"><svg><use href="#offset"/></svg></button><button class="sp" aria-label="Draw order"><svg><use href="#order2"/></svg><i class="c"></i></button></div>
      </div>
    </div>
    <h2>Modify<i class="t"></i></h2>
  </div>
  <div class="panel view">
    <div class="body"><div class="rows">
      <button class="sp" aria-label="Views"><svg><use href="#boxv"/></svg><i class="c"></i></button>
      <button class="sp" aria-label="Visual style"><svg><use href="#vstyle"/></svg><i class="c"></i></button>
      <button class="sp" aria-label="Zoom extents"><svg><use href="#zext"/></svg><i class="c"></i></button>
    </div></div>
    <h2>View</h2>
  </div>
  <div class="panel layers">
    <div class="body"><div class="rows">
      <div class="licons">
        <button class="b" aria-label="Layer properties"><svg><use href="#layerp"/></svg></button><button class="b" aria-label="Isolate"><svg><use href="#layb"/></svg></button><button class="b" aria-label="Unisolate"><svg><use href="#layb"/></svg></button><button class="b" aria-label="Freeze"><svg><use href="#layf"/></svg></button><button class="b" aria-label="Off"><svg><use href="#layo"/></svg></button><button class="b" aria-label="Match layer"><svg><use href="#laym"/></svg></button><button class="b" aria-label="Previous"><svg><use href="#layv"/></svg></button><button class="b" aria-label="Make current"><svg><use href="#layc"/></svg></button>
      </div>
      <label class="dk"><select aria-label="Layer state"><option>Unsaved Layer State</option></select></label>
      <label class="dk"><svg><use href="#bulb"/></svg><svg><use href="#sun"/></svg><svg><use href="#lock"/></svg><i class="sw big-sw"></i><select aria-label="Layer"><option>Wall-1</option></select></label>
    </div></div>
    <h2>Layers<i class="t"></i></h2>
  </div>
  <div class="panel anno">
    <div class="body">
      <button class="big mt"><svg><use href="#hugeA"/></svg><span>Multiline<br>Text</span><i class="c"></i></button>
      <div class="cols">
        <button class="sp" aria-label="Dimension"><svg><use href="#dim"/></svg><i class="c"></i></button>
        <button class="sp" aria-label="Revision cloud"><svg><use href="#cloud"/></svg><i class="c"></i></button>
        <button class="sp" aria-label="Leader"><svg><use href="#leader"/></svg><i class="c"></i></button>
        <button class="sp" aria-label="Keynote"><svg><use href="#leader2"/></svg><i class="c"></i></button>
        <button class="sp" aria-label="Tag"><svg><use href="#tag"/></svg><i class="c"></i></button>
        <button class="sp" aria-label="Table"><svg><use href="#table"/></svg><i class="c"></i></button>
      </div>
    </div>
    <h2>Annotation<i class="t"></i></h2>
  </div>
  <div class="panel inq">
    <div class="body"><div class="rows">
      <button class="rb"><svg><use href="#dist"/></svg>Distance</button>
      <button class="rb"><svg><use href="#area"/></svg>Area</button>
      <button class="rb"><svg><use href="#calc"/></svg>QuickCalc</button>
    </div></div>
    <h2>Inquiry<i class="t"></i></h2>
  </div>
  <div class="panel sect">
    <div class="body">
      <button class="big"><svg><use href="#house"/></svg><span>Vertical<br>Section</span></button>
      <div class="rows">
        <button class="rb"><svg><use href="#hsec"/></svg>Horizontal Section</button>
        <button class="rb"><svg><use href="#secl"/></svg>Section Line</button>
        <button class="rb"><svg><use href="#elvl"/></svg>Elevation Line</button>
      </div>
    </div>
    <h2>Section &amp; Elevation<i class="t"></i></h2>
  </div>
  <div class="panel det">
    <div class="body"><button class="big"><svg><use href="#detail"/></svg><span>Detail<br>Components</span></button></div>
    <h2>Details</h2>
  </div>
</section>

<div class="doctabs">
  <div class="doctab"><a href="#">01-Factory TK2 A-101...sue3 Chlorine Zone*</a><button aria-label="Close drawing">×</button></div>
  <button class="plus" aria-label="New drawing">+</button>
</div>

<div class="tbrow first">
  <div class="tb">
    <i class="grip"></i>
    <button class="b" aria-label="New"><svg><use href="#new"/></svg></button>
    <button class="b" aria-label="Open"><svg><use href="#open"/></svg></button>
    <button class="b" aria-label="Save"><svg><use href="#save"/></svg></button>
    <i class="sep"></i>
    <button class="b" aria-label="Plot"><svg><use href="#print"/></svg></button>
    <button class="b" aria-label="Preview"><svg><use href="#preview"/></svg></button>
    <button class="b" aria-label="Publish"><svg><use href="#publish"/></svg></button>
    <button class="b" aria-label="3D DWF"><svg><use href="#threed"/></svg></button>
    <i class="sep"></i>
    <button class="b" aria-label="Cut"><svg><use href="#cut"/></svg></button>
    <button class="b" aria-label="Copy"><svg><use href="#copy"/></svg></button>
    <button class="b" aria-label="Paste"><svg><use href="#paste"/></svg></button>
    <button class="b" aria-label="Match properties"><svg><use href="#matchs"/></svg></button>
    <button class="b" aria-label="Block editor"><svg><use href="#block"/></svg></button>
    <i class="sep"></i>
    <button class="b" aria-label="Undo"><svg><use href="#undo"/></svg></button><i class="c mid"></i>
    <button class="b" aria-label="Redo"><svg><use href="#redo"/></svg></button><i class="c mid"></i>
    <i class="sep"></i>
    <button class="b" aria-label="Pan"><svg><use href="#pan"/></svg></button>
    <button class="b" aria-label="Zoom realtime"><svg><use href="#zoom"/></svg></button>
    <button class="b" aria-label="Zoom window"><svg><use href="#zoomwin"/></svg></button>
    <button class="b" aria-label="Zoom previous"><svg><use href="#zoomprev"/></svg></button>
    <i class="sep"></i>
    <button class="b" aria-label="Properties"><svg><use href="#props"/></svg></button>
    <button class="b" aria-label="DesignCenter"><svg><use href="#dc"/></svg></button>
    <button class="b" aria-label="Tool palettes"><svg><use href="#pal"/></svg></button>
    <button class="b" aria-label="Sheet set"><svg><use href="#sheet"/></svg></button>
    <button class="b" aria-label="Markup set"><svg><use href="#markup"/></svg></button>
    <button class="b" aria-label="QuickCalc"><svg><use href="#calc"/></svg></button>
    <i class="sep"></i>
    <button class="b" aria-label="Help"><svg><use href="#help"/></svg></button>
  </div>
  <div class="tb">
    <i class="grip"></i>
    <button class="b" aria-label="Text style"><svg><use href="#txst"/></svg></button>
    <label class="cb w100 in"><select aria-label="Text style"><option>Load</option></select></label>
    <i class="sep"></i><button class="b" aria-label="Dimension style"><svg><use href="#dimst"/></svg></button>
    <label class="cb w100 in"><select aria-label="Dimension style"><option>Arrow-250</option></select></label>
    <i class="sep"></i><button class="b" aria-label="Table style"><svg><use href="#tbst"/></svg></button>
    <label class="cb w100"><select aria-label="Table style"><option>Standard</option></select></label>
    <i class="sep"></i><button class="b" aria-label="Multileader style"><svg><use href="#mlst"/></svg></button>
    <label class="cb w100 in"><select aria-label="Multileader style"><option>Standard</option></select></label>
  </div>
  <div class="tb">
    <i class="grip"></i>
    <button class="b" aria-label="Array"><svg><use href="#array"/></svg></button>
    <button class="b" aria-label="Edit spline"><svg><use href="#conv"/></svg></button>
    <button class="b" aria-label="Edit array"><svg><use href="#dots"/></svg></button>
  </div>
</div>
<div class="tbrow second">
  <div class="tb">
    <i class="grip"></i>
    <button class="b" aria-label="Layer properties"><svg><use href="#layerp"/></svg></button>
    <label class="cb w250"><svg><use href="#bulb"/></svg><svg><use href="#sun"/></svg><svg><use href="#vp"/></svg><svg><use href="#lock"/></svg><i class="sw"></i><select aria-label="Current layer"><option>Wall-1</option></select></label>
    <button class="b" aria-label="Make current"><svg><use href="#layc"/></svg></button>
    <button class="b" aria-label="Layer previous"><svg><use href="#layv"/></svg></button>
    <button class="b" aria-label="Layer states"><svg><use href="#layerp"/></svg></button>
  </div>
  <div class="tb">
    <i class="grip"></i>
    <label class="cb w125"><i class="sw"></i><select aria-label="Color"><option>ByLayer</option></select></label>
    <i class="sep"></i>
    <label class="cb w134"><i class="ln long"></i><select aria-label="Linetype"><option>ByLayer</option></select></label>
    <i class="sep"></i>
    <label class="cb w104"><i class="ln"></i><select aria-label="Lineweight"><option>ByLayer</option></select></label>
    <i class="sep"></i>
    <label class="cb w100 off"><select aria-label="Plot style" disabled><option>ByColor</option></select></label>
  </div>
  <div class="tb">
    <i class="grip"></i>
    <button class="b" aria-label="Bring to front"><svg><use href="#order1"/></svg></button>
    <button class="b" aria-label="Send to back"><svg><use href="#order2"/></svg></button>
    <button class="b" aria-label="Bring above"><svg><use href="#order3"/></svg></button>
    <button class="b" aria-label="Send under"><svg><use href="#order4"/></svg></button>
    <i class="sep"></i>
    <button class="b" aria-label="Annotations to front"><svg><use href="#abc"/></svg></button>
    <button class="b" aria-label="Hatch to back"><svg><use href="#order5"/></svg></button>
    <button class="b" aria-label="Isolate"><svg><use href="#order6"/></svg></button>
  </div>
</div>

<main class="work">
  <div class="left">
    <div class="stage">
      <div class="vtb">
        <i class="grip"></i>
        <button class="b" aria-label="Line"><svg><use href="#line"/></svg></button>
        <button class="b" aria-label="Construction line"><svg><use href="#xline"/></svg></button>
        <button class="b" aria-label="Polyline"><svg><use href="#pline"/></svg></button>
        <button class="b" aria-label="Polygon"><svg><use href="#poly"/></svg></button>
        <button class="b" aria-label="Rectangle"><svg><use href="#rect"/></svg></button>
        <button class="b" aria-label="Arc"><svg><use href="#arc"/></svg></button>
        <button class="b" aria-label="Circle"><svg><use href="#circle"/></svg></button>
        <button class="b" aria-label="Revision cloud"><svg><use href="#cloud"/></svg></button>
        <button class="b" aria-label="Spline"><svg><use href="#spline"/></svg></button>
        <button class="b" aria-label="Ellipse"><svg><use href="#ellipse"/></svg></button>
        <button class="b" aria-label="Ellipse arc"><svg><use href="#elarc"/></svg></button>
        <button class="b" aria-label="Insert block"><svg><use href="#insert"/></svg></button>
        <button class="b" aria-label="Make block"><svg><use href="#mkblock"/></svg></button>
        <button class="b" aria-label="Point"><svg><use href="#point"/></svg></button>
        <button class="b" aria-label="Hatch"><svg><use href="#hatch"/></svg></button>
        <button class="b" aria-label="Gradient"><svg><use href="#grad"/></svg></button>
        <button class="b" aria-label="Region"><svg><use href="#region"/></svg></button>
        <button class="b" aria-label="Table"><svg><use href="#table"/></svg></button>
        <button class="b" aria-label="Multiline text"><svg><use href="#bigA"/></svg></button>
        <button class="b" aria-label="Add selected"><svg><use href="#addsel"/></svg></button>
      </div>
      <div class="vtb short">
        <i class="grip"></i>
        <button class="b" aria-label="Erase"><svg><use href="#erase"/></svg></button>
        <button class="b" aria-label="Copy"><svg><use href="#copyo"/></svg></button>
        <button class="b" aria-label="Mirror"><svg><use href="#mirror"/></svg></button>
        <button class="b" aria-label="Offset"><svg><use href="#offset"/></svg></button>
        <button class="b" aria-label="Array"><svg><use href="#array"/></svg></button>
        <button class="b" aria-label="Move"><svg><use href="#move"/></svg></button>
        <button class="b" aria-label="Rotate"><svg><use href="#rotate"/></svg></button>
        <button class="b" aria-label="Scale"><svg><use href="#scale"/></svg></button>
        <button class="b" aria-label="Stretch"><svg><use href="#stretch"/></svg></button>
        <button class="b" aria-label="Trim"><svg><use href="#trim"/></svg></button>
        <button class="b" aria-label="Extend"><svg><use href="#extend"/></svg></button>
        <button class="b" aria-label="Break at point"><svg><use href="#break1"/></svg></button>
        <button class="b" aria-label="Break"><svg><use href="#break2"/></svg></button>
        <button class="b" aria-label="Join"><svg><use href="#join"/></svg></button>
        <button class="b" aria-label="Chamfer"><svg><use href="#chamfer"/></svg></button>
        <button class="b" aria-label="Fillet"><svg><use href="#fillet"/></svg></button>
        <button class="b" aria-label="Blend"><svg><use href="#blend"/></svg></button>
        <button class="b" aria-label="Explode"><svg><use href="#explode"/></svg></button>
      </div>
      <div class="canvas">
        <span class="vplabel">[−][Top][2D Wireframe]</span>
        <i class="hairv"></i><i class="hairh"></i><i class="pickbox"></i>
        <svg class="ucs" viewBox="0 0 64 64"><path d="M4.500 18v41M4.500 58.500H46" stroke="#ddd"/><path d="M.5 54.500h8v8h-8z" fill="none" stroke="#eee"/><path d="M5 2l6 6 5-6M11 8v6M49 46l12 12M61 46L49 58" fill="none" stroke="#e4e4e4"/></svg>
        <div class="cube">
          <svg viewBox="0 0 104 104"><circle cx="52" cy="52" r="41" fill="none" stroke="#2a2a2a" stroke-width="10"/><path d="M32 32h40v40H32z" fill="#a9a9a9"/><path d="M39 39h26v26H39z" fill="#9b9ba3"/></svg>
          <b class="n">N</b><b class="e">E</b><b class="s">S</b><b class="w">W</b><b class="top">TOP</b>
        </div>
        <button class="wcs">WCS<i></i></button>
        <svg class="navbar" viewBox="0 0 28 178"><g fill="none" stroke="#2c2c2c" stroke-width="1.300"><circle cx="22" cy="5" r="3"/><path d="M20.500 3.500l3 3M23.500 3.500l-3 3"/><path d="M5 25a9 9 0 1 1 18 0v9H14a9 9 0 0 1-9-9z"/><circle cx="14" cy="25" r="5"/><path d="M2 48h24M2 138h24" stroke="#3c3c3c"/><path d="M9 70q-2-6-5-8 1-3 4 1l-1-9q2-2 3 0l1 6 1-8q2-2 3 0v8l3-7q2-1 2 1l-2 9 3-3q2 0 1 2l-4 8q-5 3-9 0z"/><path d="M5 77l10 11M15 77L5 88M5 80v-3h3M5 85v3h3M12 77h3v3"/><circle cx="18" cy="88" r="4"/><path d="M21 91l4 4" stroke-width="2.500"/><path d="M12 125v-13h-2l4-5 4 5h-2v13zM9 114q-6 2-4 5 4 3 14 2 7-1 4-4l-5-3M8 124l-3-4 4-2"/><path d="M4 143h5v5H4zM11 143h5v5h-5zM18 143h5v5h-5zM4 150h13v11H4z"/><circle cx="22" cy="173" r="3"/><path d="M20.500 173h3"/></g><path d="M12 42h4l-2 2zM12 100h4l-2 2zM12 132h4l-2 2zM8 152l6 3.500-6 3.500z" fill="#222"/></svg>
      </div>
    </div>
    <section class="cmd">
      <div class="cmdbar"><i class="grip"></i><button aria-label="Close">✕</button><button aria-label="Customize"><svg><use href="#wrench"/></svg></button></div>
      <div class="cmdmain">
        <div class="hist"><p>Command:  Unknown command "CLOSE'_NAVBARDISPLAY".  Press F1 for help.</p><p>Command:</p><p>Unknown command "0".  Press F1 for help.</p><p>Command: Regenerating model.</p><p>Regenerating model.</p></div>
        <label class="cmdline"><svg viewBox="0 0 14 12"><path d="M.5.5h12v11H.500z" fill="#d8dde5" stroke="#9aa3b2"/><path d="M2.500 3l3 2.500-3 2.500M7 9h4" stroke="#26334a" fill="none" stroke-width="1.200"/></svg><i class="c"></i><input aria-label="Command" placeholder="Type a command"></label>
      </div>
    </section>
  </div>
  <aside class="right">
    <div class="sidetabs"><button class="on"><span>Design</span></button><button><span>Display</span></button><button><span>Extended Data</span></button></div>
    <section class="props">
      <h2>PROPERTIES</h2>
      <div class="selrow"><label class="sel"><select aria-label="Selection"><option>No selection</option></select></label>
        <button class="b" aria-label="Quick select"><svg><use href="#qsel"/></svg></button><button class="b" aria-label="Select objects"><svg><use href="#pick"/></svg></button><button class="b" aria-label="Pickadd"><svg><use href="#pick2"/></svg></button></div>
      <div class="groups">
        <button class="gh on">General<b>−</b></button>
        <table>
          <tr><th scope="row">Color</th><td><i class="sw"></i>ByLayer</td></tr>
          <tr><th scope="row">Layer</th><td>Wall-1</td></tr>
          <tr><th scope="row">Linetype</th><td><i class="pl"></i>ByLayer</td></tr>
          <tr><th scope="row">Linetype scale</th><td>1.000</td></tr>
          <tr><th scope="row">Lineweight</th><td><i class="pl"></i>ByLayer</td></tr>
          <tr><th scope="row">Transparency</th><td>ByLayer</td></tr>
          <tr><th scope="row">Thickness</th><td>0.000</td></tr>
        </table>
        <button class="gh on">3D Visualization<b>−</b></button>
        <table>
          <tr><th scope="row">Material</th><td>ByLayer</td></tr>
          <tr><th scope="row">Shadow display</th><td>Casts and Receive...</td></tr>
        </table>
        <button class="gh">Plot style<b>+</b></button>
        <button class="gh">View<b>+</b></button>
        <button class="gh">Misc<b>+</b></button>
      </div>
    </section>
    <svg class="mark" viewBox="0 0 216 222"><ellipse cx="108" cy="111" rx="105" ry="108" fill="none" stroke="#ee1c24" stroke-width="4"/></svg>
  </aside>
</main>

<footer class="status">
  <nav class="ltabs"><a class="on" href="#">Model</a><a href="#">A-101</a><a href="#">A-102</a><a href="#">A-201</a><a href="#">A-202</a><a href="#">A-203</a><a href="#">A-204</a><button aria-label="New layout">+</button></nav>
  <div class="sbar">
    <span class="sg w87">ThEe57 Arrow-25</span>
    <span class="sg w151">5666.566, 4148.749, 0.000</span>
    <button class="sg w42">MODEL</button>
    <span class="sg w56"><svg><use href="#grid"/></svg><svg><use href="#snap"/></svg><i class="c"></i></span>
    <span class="sg w21"><svg><use href="#dyn"/></svg></span>
    <span class="sg w53"><svg><use href="#ortho"/></svg><svg><use href="#polar"/></svg><i class="c"></i></span>
    <span class="sg w53"><svg><use href="#otrack"/></svg><svg><use href="#osnap"/></svg><i class="c"></i></span>
    <span class="sg w21"><svg><use href="#lwt"/></svg></span>
    <span class="sg w22"><svg><use href="#selc"/></svg></span>
    <span class="sg w125"><svg class="bl"><use href="#annv"/></svg><svg class="bl"><use href="#annv"/></svg><svg class="gy"><use href="#ann"/></svg><span>1:1000000</span><i class="c"></i></span>
    <span class="sg w34"><svg><use href="#gear"/></svg><i class="c"></i></span>
    <span class="sg w22"><svg><use href="#cross"/></svg></span>
    <span class="sg w55"><span>Standard</span><i class="c"></i></span>
    <span class="sg w56"><svg><use href="#cutp"/></svg><span>1.400</span></span>
    <span class="sg w59"><svg><use href="#elev"/></svg><span>+0.000</span></span>
    <span class="sg w24"><svg><use href="#iso"/></svg></span>
    <span class="sg w23"><svg><use href="#hw"/></svg></span>
    <span class="sg w90"><svg><use href="#wave"/></svg><svg><use href="#bluebox"/></svg><svg><use href="#plane"/></svg><svg><use href="#trust"/></svg><svg><use href="#opack"/></svg></span>
    <span class="sg grow"><svg><use href="#clean"/></svg><svg><use href="#burger"/></svg></span>
  </div>
</footer>

<div class="taskbar">
  <svg class="fur" viewBox="0 0 625 33" preserveAspectRatio="none">
    <defs><linearGradient id="fg"><stop offset="0" stop-color="#54473a" stop-opacity="0"/><stop offset=".06" stop-color="#8d8072"/><stop offset=".12" stop-color="#a89a8d"/><stop offset=".18" stop-color="#7a6e61"/><stop offset=".32" stop-color="#6a6055"/><stop offset=".42" stop-color="#857a6e"/><stop offset=".55" stop-color="#968a7e"/><stop offset=".68" stop-color="#7d7164"/><stop offset=".78" stop-color="#5a4d42"/><stop offset="1" stop-color="#4c4138"/></linearGradient></defs>
    <path d="M0 0h625v33H0z" fill="url(#fg)"/>
    <path d="M38 0h26l44 33H74z" fill="#b5a699" opacity=".6"/>
    <path d="M150 0l44 33h24L168 0zM215 0l50 33h18L228 0z" fill="#a99d90" opacity=".3"/>
    <path d="M440 0L370 33h30L456 0z" fill="#b9aca0" opacity=".4"/>
    <path d="M10 33L30 2M18 33L42 4M28 30L50 3M4 20L30 0M80 0l34 26M92 0l40 33M104 0l8 33M118 0l-14 33M128 3l22 30M140 0l-6 33M160 2l30 31M172 0l-10 33M186 0l20 33M200 0l6 33M214 6l-24 27M226 0l30 33M240 0l-14 33M252 4l4 29M266 0l20 33M278 0l-12 33M290 0l4 33M304 0l-20 33M316 3l8 30M328 0l-16 33M340 0l-6 33M352 2l-26 31M364 0l-22 33M376 0l-10 33M390 4l-40 29M402 0l-34 33M416 0l-40 33M430 0l-44 33M448 0l-30 33M470 3l-50 26M488 0l-50 30M60 33L48 8M70 20L58 33M540 2l60 14M560 0l60 12" stroke="#d5cabd" stroke-width=".8" opacity=".4" fill="none"/>
    <path d="M100 10l20 23M146 0l10 33M196 0l-18 33M234 0l16 33M262 0l-4 33M298 0l12 33M336 0l-22 33M384 0l-22 33M424 0l-34 33" stroke="#3b3029" opacity=".3" fill="none"/>
  </svg>
  <button class="start" aria-label="Start"><svg viewBox="0 0 24 22"><path d="M1 4l9-1.500V10H1zM11 2.300L23 .5V10H11zM1 11.500h9V19l-9-1.500zM11 11.500h12V21l-12-1.800z" fill="#fff"/></svg></button>
  <button class="app" aria-label="Internet Explorer"><svg viewBox="0 0 28 28"><path d="M22.500 19A8.500 8.500 0 1 1 23 15H8" fill="none" stroke="#35b3ee" stroke-width="5"/><path d="M3 26C-2 20 18-2 26 3q2 2-1 6" fill="none" stroke="#f3c72c" stroke-width="2"/></svg></button>
  <button class="app" aria-label="File Explorer"><svg viewBox="0 0 28 28"><path d="M2 4l7-2 2 2h13l2 2v18H2z" fill="#e8c867"/><path d="M1 7h26v18H2z" fill="#f9e7a2"/><path d="M4 2h6v3H4z" fill="#58b947"/><path d="M15 3h5v3h-5z" fill="#3f8fe0"/><path d="M6 27v-9q0-2 2-2h12q2 0 2 2v9h-4v-6h-8v6z" fill="#86c5ee"/></svg></button>
  <button class="app" aria-label="Chrome"><svg viewBox="0 0 28 28"><circle cx="14" cy="14" r="12" fill="#3eae52"/><path d="M14 14L3.600 8A12 12 0 0 1 24.400 8z" fill="#e0443a"/><path d="M14 14L24.400 8A12 12 0 0 1 14 26z" fill="#f8cf3a"/><path d="M14 8.500h10.600A12 12 0 0 0 3.600 8l5.600 8z" fill="#e0443a"/><circle cx="14" cy="14" r="5.600" fill="#fff"/><circle cx="14" cy="14" r="4.400" fill="#3f84ee"/></svg></button>
  <button class="app plain" aria-label="Store"><svg viewBox="0 0 28 28"><path d="M1 2h26v24H1z" fill="#0c8a12"/><path d="M6 9l16-2-1 16-14-2z" fill="#fff"/><path d="M10 8q0-5 4-5t4 4" fill="none" stroke="#fff" stroke-width="1.500"/><path d="M10 12l3-.4V15h-3zM14 11.500l4-.5v4h-4zM10 16h3v3l-3-.4zM14 16h4v3.500l-4-.4z" fill="#0c8a12"/></svg></button>
  <button class="app act" aria-label="AutoCAD"><svg viewBox="0 0 28 28"><path d="M1 1h26v20H1z" fill="#f2b9b9"/><path d="M1 21h26v6H1z" fill="#d8363c"/><path d="M14 21h13v6z" fill="#f7dede"/><path d="M6 20l6-17h4l6 17-6-1-2-3-3 3z" fill="#b01a20"/></svg></button>
  <button class="app line" aria-label="LINE"><svg viewBox="0 0 28 28"><rect x="1" y="1" width="26" height="26" rx="5" fill="#0dbb12"/><ellipse cx="14" cy="13" rx="10" ry="8.500" fill="#fff"/><path d="M11 20l3 5 6-6z" fill="#fff"/><text x="14" y="15" text-anchor="middle" class="linetxt">LINE</text></svg></button>
  <div class="tray">
    <i class="up"></i>
    <svg viewBox="0 0 16 16"><path d="M3 2v13" stroke="#fff" stroke-width="1.500"/><path d="M4 3h8v6H4z" fill="#fff"/><circle cx="11" cy="11" r="4" fill="#e02b2b"/><path d="M9.500 9.500l3 3M12.500 9.500l-3 3" stroke="#fff"/></svg>
    <svg viewBox="0 0 16 16"><path d="M5 4h10v7H5zM8 14h6M11 11v3M1 2h4v4H1zM3 6v8h4" fill="none" stroke="#fff" stroke-width="1.200"/></svg>
    <svg viewBox="0 0 16 16"><path d="M2 6h3l4-4v12L5 10H2z" fill="#fff"/><path d="M11 5q2 3 0 6M13 3q3 5 0 10" fill="none" stroke="#ddd"/></svg>
    <span class="lang">ENG</span>
    <span class="clock"><span>13:55</span><span>27/10/2559</span></span>
  </div>
</div>
</body>
</html>
```
FILE: styles.css
```css
* { box-sizing: border-box; }
html, body { height: 100%; }
body {
  margin: 0; display: flex; flex-direction: column; min-height: 100vh; overflow: hidden;
  background: #5c5c5c; color: #e6e6e6; font: 10px/12px Roboto, "Open Sans", sans-serif;
}
button, select, input { font: inherit; color: inherit; margin: 0; padding: 0; border: 0; background: none; border-radius: 0; }
select { appearance: none; outline: 0; }
a { color: inherit; text-decoration: none; }
h1, h2, p { margin: 0; font: inherit; }
i { font-style: normal; flex: none; }
svg { width: 16px; height: 16px; flex: none; display: block; }
.defs { position: absolute; width: 0; height: 0; }

.c { width: 5px; height: 3px; background: #eee; clip-path: polygon(0 0, 100% 0, 50% 100%); }
.c.wide { margin: 0 5px; }
.c.mid { margin: 0 3px; background: #2c2c2c; }
.t { width: 7px; height: 4px; background: #eee; clip-path: polygon(0 0, 100% 0, 50% 100%); margin-left: 5px; }
.b { width: 19px; height: 18px; display: grid; place-items: center; flex: none; }
.b svg { width: 15px; height: 15px; }
.sep { width: 1px; height: 14px; margin: 0 2px; background: #7d7d7d; }
.grip { width: 4px; height: 13px; margin: 0 2px; background: repeating-linear-gradient(#858585 0 1px, transparent 1px 2px); }
.sw { width: 9px; height: 9px; background: #f00; border: 1px solid #222; }

/* title bar */
.titlebar { display: flex; height: 21px; align-items: stretch; background: #ececec; position: relative; z-index: 2; }
.appbtn { width: 34px; height: 34px; background: linear-gradient(#b0b0b0, #6c6c6c); border: 1px solid #333; flex: none; }
.appbtn svg { width: 32px; height: 32px; }
.qat { display: flex; align-items: center; width: 207px; padding-left: 4px; background: linear-gradient(#9a9a9a, #757575); }
.qat .b { width: 20px; }
.qat .b + .c { margin: 0 5px 0 2px; }
.qat .sep { margin: 0 3px; background: #8c8c8c; }
.qat .dim { opacity: .5; }
.titlebar h1 { flex: 1; display: flex; justify-content: center; align-items: center; gap: 12px; color: #1c1c1c; font: 12px/20px "Open Sans", sans-serif; white-space: nowrap; }
.expand { width: 11px; background: #777; display: grid; place-items: center; }
.expand i { width: 4px; height: 6px; background: #fff; clip-path: polygon(0 0, 100% 50%, 0 100%); }
.search { width: 150px; background: #6f6f6f; border: 1px solid #3a3a3a; padding-left: 2px; font-style: italic; }
.search::placeholder { color: #c9c9c9; opacity: 1; }
.info { display: flex; align-items: center; width: 209px; background: linear-gradient(#9a9a9a, #757575); }
.info .b { width: 20px; }
.info .c.wide { margin: 0 4px 0 1px; }
.signin { display: flex; align-items: center; gap: 3px; flex: 1; padding-left: 2px; }
.signin .c { margin-left: auto; margin-right: 6px; }
.info .sep { margin: 0 4px; background: #8c8c8c; }
.winbtns { display: flex; width: 102px; justify-content: flex-end; align-items: flex-start; padding-right: 3px; }
.winbtns button { width: 22px; height: 16px; display: grid; place-items: center; }
.winbtns .x { width: 37px; background: #bcbcbc; }
.winbtns svg { width: 12px; height: 12px; }

/* menu and ribbon tabs */
.menubar { display: flex; align-items: center; height: 17px; padding: 0 5px 0 45px; gap: 20px; background: linear-gradient(#9a9a9a, #5f5f5f); color: #f4f4f4; border-top: 1px solid #4a4a4a; }
.mdi { width: 40px; height: 12px; margin-left: auto; }
.tabs { display: flex; align-items: flex-end; height: 17px; padding-left: 3px; background: #525252; border-bottom: 1px solid #333; color: #d0d0d0; }
.tabs a { padding: 0 8px; line-height: 15px; }
.tabs a.on { background: linear-gradient(#7a7a7a, #5e5e5e); border: 1px solid #333; border-bottom: 0; color: #fff; line-height: 14px; padding: 0 7px; }
.ribmin { width: 11px; height: 7px; margin: 0 5px 4px 18px; border-radius: 2px; background: #eee; display: grid; place-items: center; }
.ribmin i { width: 4px; height: 2px; background: #333; clip-path: polygon(50% 0, 100% 100%, 0 100%); }
.tabs > .c { margin-bottom: 6px; }

.ribbon { display: flex; height: 82px; background: linear-gradient(#4d4d4d, #363636); border-bottom: 1px solid #6e6e6e; }
.panel { display: flex; flex-direction: column; background: #5d5d5d; border-right: 1px solid #484848; flex: none; }
.panel h2 { height: 15px; display: flex; align-items: center; justify-content: center; background: #4a4a4a; margin-top: auto; }
.body { display: flex; padding-top: 4px; }
.big { display: flex; flex-direction: column; align-items: center; width: 48px; height: 60px; padding-top: 2px; line-height: 13px; }
.big svg { width: 26px; height: 26px; margin-bottom: 3px; }
.big .tall { width: 18px; }
.big .c { margin-top: 3px; }
.vsep { width: 1px; height: 60px; background: #808080; }
.cols { display: grid; grid-auto-rows: 20px; }
.rows { display: grid; grid-auto-rows: 20px; }
.rows > div { display: flex; }
.rb { display: flex; align-items: center; gap: 4px; white-space: nowrap; }
.rb svg { width: 15px; height: 15px; }
.rb .c { margin-left: 4px; }
.sp { display: flex; align-items: center; gap: 5px; width: 33px; }
.sp svg { width: 15px; height: 15px; }
.sp.one { width: 20px; }
.build { width: 345px; }
.build .big { width: 50px; }
.build .cols { grid-template-columns: 72px 77px auto; padding-left: 7px; }
.draw { width: 105px; }
.draw .big { width: 41px; padding-right: 2px; }
.draw .cols, .anno .cols { grid-template-columns: 33px 30px; }
.modify { width: 144px; }
.modify .big { width: 53px; }
.modify .spread .sp { width: 30px; }
.view { width: 34px; }
.view .rows { padding-left: 3px; }
.layers { width: 178px; }
.layers .rows { padding-left: 2px; }
.licons { width: 172px; justify-content: space-between; align-items: center; }
.licons svg { width: 14px; height: 14px; }
.dk { display: flex; align-items: center; gap: 1px; width: 167px; height: 19px; border: 1px solid #363636; background: linear-gradient(#5f5f5f, #707070); padding: 0 2px; position: relative; }
.dk select { flex: 1; min-width: 0; padding-left: 1px; }
.dk::after { content: ""; position: absolute; right: 3px; top: 7px; width: 7px; height: 4px; background: #eee; clip-path: polygon(0 0, 100% 0, 50% 100%); pointer-events: none; }
.big-sw { width: 12px; height: 12px; margin: 0 3px 0 1px; }
.dk svg { width: 15px; height: 13px; }
.anno { width: 123px; }
.anno .big { width: 61px; position: relative; }
.anno .cols { padding-left: 1px; }
.mt .c { position: absolute; right: 4px; bottom: 12px; }
.inq { width: 75px; }
.inq .rows { padding-left: 3px; }
.sect { width: 148px; }
.sect .big { width: 41px; }
.det { width: 66px; }
.det .big { width: 66px; }

/* drawing tabs */
.doctabs { display: flex; align-items: flex-end; height: 22px; margin-top: 1px; padding-left: 12px; background: #383838; }
.doctab { display: flex; align-items: center; justify-content: space-between; width: 232px; height: 19px; padding: 0 13px 0 14px; background: linear-gradient(#8a8a8a, #5f5f5f); clip-path: polygon(0 100%, 3% 80%, 5% 10%, 7% 0, 93% 0, 95% 10%, 98% 85%, 100% 100%); white-space: nowrap; }
.doctab button { color: #3a3a3a; font-weight: 700; font-size: 12px; }
.plus { width: 19px; height: 13px; margin: 0 0 4px 4px; background: #5c5c5c; border-radius: 2px 8px 4px 8px; font-weight: 700; font-size: 12px; line-height: 12px; }

/* toolbars */
.tbrow { display: flex; height: 23px; align-items: flex-start; background: #5c5c5c; padding-top: 1px; }
.tbrow.first { border-top: 1px solid #6e6e6e; }
.tbrow.second { height: 25px; }
.tb { display: flex; align-items: center; height: 20px; background: #535353; border: 1px solid #414141; flex: none; }
.first .tb:first-child { padding-right: 2px; }
.cb { display: flex; align-items: center; height: 18px; background: #efefef; color: #1a1a1a; padding: 0 4px; position: relative; }
.cb select { flex: 1; min-width: 0; opacity: 1; }
.cb.in { padding-left: 16px; }
.cb svg { width: 13px; height: 13px; }
.w250 svg { width: 14px; }
.cb .sw + select { padding-left: 3px; }
.cb::after { content: ""; position: absolute; right: 4px; top: 5px; width: 5px; height: 5px; border: solid #333; border-width: 0 1px 1px 0; transform: rotate(45deg); pointer-events: none; }
.cb.off { color: #8a8a8a; padding-left: 8px; }
.cb.off::after { border-color: #aaa; }
.w100 { width: 100px; } .w250 { width: 248px; padding-left: 1px; } .w125 { width: 124px; } .w134 { width: 134px; } .w104 { width: 104px; }
.ln { width: 29px; height: 1px; background: #111; margin-right: 4px; }
.ln.long { width: 49px; }

/* work area */
.work { flex: 1; display: flex; min-height: 0; }
.left { flex: 1; display: flex; flex-direction: column; min-width: 0; }
.stage { flex: 1; display: flex; min-height: 0; align-items: stretch; }
.vtb { display: flex; flex-direction: column; align-items: center; justify-content: space-between; width: 20px; height: 375px; border: 1px solid #414141; background: #535353; margin-right: 3px; padding-bottom: 1px; flex: none; }
.vtb.short { height: 338px; margin-right: 5px; }
.vtb .grip { width: 13px; height: 4px; margin: 1px 0; background: repeating-linear-gradient(90deg, #858585 0 1px, transparent 1px 2px); }
.vtb .b { height: 18px; width: 18px; }
.vtb svg { width: 14px; height: 14px; }
.canvas { flex: 1; background: #000; position: relative; overflow: hidden; }
.vplabel { position: absolute; left: 2px; top: 6px; }
.hairv { position: absolute; left: 66.1%; top: 0; bottom: 0; width: 1px; background: #e8e8e8; }
.hairh { position: absolute; top: 363px; left: 0; right: 0; height: 1px; background: #e8e8e8; }
.pickbox { position: absolute; left: 66.1%; top: 357px; width: 13px; height: 13px; margin-left: -6px; background: #000; border: 1px solid #fff; }
.ucs { position: absolute; left: 10px; bottom: 10px; width: 64px; height: 64px; }
.cube { position: absolute; right: 12px; top: 11px; width: 104px; height: 104px; color: #b4b4b4; font: 700 16px/16px "Liberation Sans", sans-serif; }
.cube svg { width: 104px; height: 104px; }
.cube b { position: absolute; width: 18px; text-align: center; }
.cube .n { left: 43px; top: 1px; } .cube .s { left: 43px; top: 88px; }
.cube .w { left: 0; top: 44px; } .cube .e { right: 0; top: 44px; }
.cube .top { left: 32px; top: 44px; width: 40px; font-size: 10px; color: #444; }
.wcs { position: absolute; right: 44px; top: 131px; width: 40px; height: 14px; border-radius: 4px; background: #8d8d96; color: #4f4f55; display: flex; align-items: center; justify-content: space-between; padding: 0 3px; border: 1px solid #a5a5ad; font-family: "Liberation Sans", sans-serif; }
.wcs i { width: 7px; height: 4px; background: #a8a8b0; clip-path: polygon(0 0, 100% 0, 50% 100%); }
.navbar { position: absolute; right: 2px; top: 166px; width: 28px; height: 178px; background: #484848; border-radius: 4px; }

/* command window */
.cmd { display: flex; height: 86px; border-top: 2px solid #6e6e6e; flex: none; }
.cmdbar { width: 19px; background: linear-gradient(#828282, #3d3d3d); display: flex; flex-direction: column; align-items: center; gap: 4px; flex: none; }
.cmdbar .grip { width: 14px; height: 5px; margin: 4px 0 0; background: repeating-linear-gradient(90deg, #aaa 0 1px, transparent 1px 2px); }
.cmdbar button { color: #fff; font-size: 11px; }
.cmdbar svg { width: 13px; height: 13px; }
.cmdmain { flex: 1; display: flex; flex-direction: column; }
.hist { flex: 1; display: flex; flex-direction: column; justify-content: space-between; background: #c8c8c8; color: #1a1a1a; padding: 1px 2px; font: 10px/12px "DejaVu Sans Mono", monospace; white-space: pre; }
.cmdline { height: 19px; background: #fff; border-top: 1px solid #999; display: flex; align-items: center; padding-left: 4px; }
.cmdline svg { width: 14px; height: 12px; }
.cmdline .c { background: #888; margin: 0 6px 0 2px; }
.cmdline input { flex: 1; font: italic 10px/16px "DejaVu Sans Mono", monospace; outline: 0; }
.cmdline input::placeholder { color: #8a8a8a; opacity: 1; }

/* properties palette */
.right { display: flex; width: 264px; flex: none; position: relative; }
.sidetabs { width: 20px; padding-top: 24px; display: flex; flex-direction: column; }
.sidetabs button { height: 124px; margin-left: 2px; border: 1px solid #3c3c3c; border-radius: 4px 0 0 4px; background: #505050; display: grid; place-items: center; color: #aaa; }
.sidetabs .on { background: #5c5c5c; border-right-color: #5c5c5c; color: #f0f0f0; }
.sidetabs span { writing-mode: vertical-rl; transform: rotate(180deg); white-space: nowrap; }
.props { flex: 1; padding-top: 2px; }
.props h2 { height: 21px; padding-left: 11px; background: #525252; font: 12px/21px "Open Sans", sans-serif; }
.selrow { display: flex; align-items: center; gap: 1px; padding: 9px 0 0 3px; }
.sel { width: 171px; height: 20px; margin-right: 3px; border: 1px solid #3a3a3a; background: linear-gradient(#7a7a7a, #6a6a6a); position: relative; display: flex; padding-left: 3px; }
.sel select { flex: 1; }
.sel::after { content: ""; position: absolute; right: 3px; top: 8px; width: 5px; height: 3px; background: #eee; clip-path: polygon(0 0, 100% 0, 50% 100%); pointer-events: none; }
.sel::before { content: ""; position: absolute; right: 11px; top: 0; bottom: 0; width: 1px; background: #444; pointer-events: none; }
.groups { display: flex; flex-direction: column; padding: 2px 15px 0 7px; }
.gh { height: 17px; margin-bottom: 2px; display: flex; justify-content: space-between; align-items: center; padding: 0 5px; border: 1px solid #383838; background: #484848; color: #b4b4b4; font-weight: 700; }
.gh.on { color: #fff; margin-bottom: 0; }
.gh b { font: 700 12px/12px "Liberation Sans", sans-serif; color: #fff; }
.groups table { border-collapse: collapse; margin: 0 0 1px 14px; table-layout: fixed; }
.groups th, .groups td { height: 16px; padding: 0 5px; text-align: left; font-weight: 400; border: 1px solid #525252; border-top: 0; line-height: 12px; white-space: nowrap; }
.groups th { width: 112px; }
.groups td { padding: 0 2px; overflow: hidden; }
.groups td .sw { display: inline-block; margin-right: 5px; vertical-align: -1px; }
.pl { display: inline-block; width: 40px; height: 1px; margin: 0 5px 3px 2px; background: #eee; }
.mark { position: absolute; width: 216px; height: 222px; left: -174px; top: -51px; pointer-events: none; }

/* status bar */
.status { display: flex; height: 24px; background: #383838; flex: none; }
.ltabs { flex: 1; display: flex; align-items: flex-start; padding-left: 9px; color: #b0b0b0; }
.ltabs a { width: 47px; height: 16px; margin-right: -2px; line-height: 16px; text-align: center; background: linear-gradient(#555, #6a6a6a); clip-path: polygon(0 0, 100% 0, 90% 80%, 85% 100%, 15% 100%, 10% 80%); }
.ltabs .on { width: 50px; background: #7a7a7a; color: #fff; font-weight: 700; }
.ltabs button { width: 20px; height: 14px; margin-left: 3px; background: #5a5a5a; border-radius: 6px 2px 8px 4px; font-weight: 700; font-size: 12px; line-height: 12px; }
.sbar { display: flex; width: 1036px; padding: 1px 0; background: #4f4f4f; }
.sg { display: flex; align-items: center; justify-content: space-around; border: 1px solid #7b7b7b; border-left-width: 0; white-space: nowrap; flex: none; color: #f2f2f2; }
.sg svg { width: 15px; height: 15px; }
.w87 { width: 88px; border-left-width: 1px; } .w151 { width: 151px; justify-content: flex-end; padding-right: 4px; } .w42 { width: 42px; } .w56 { width: 56px; } .w21 { width: 21px; }
.w53 { width: 53px; } .w22 { width: 22px; } .sbar .w125 { width: 125px; } .w34 { width: 34px; } .w55 { width: 55px; } .w59 { width: 59px; }
.w24 { width: 24px; } .w23 { width: 23px; } .w90 { width: 90px; }
.grow { flex: 1; }
.bl { color: #3a94f4; } .gy { color: #b4b4b4; }

/* taskbar */
.taskbar { display: flex; align-items: stretch; height: 34px; padding: 1px 0; background: #54463a; position: relative; flex: none; }
.fur { position: absolute; right: 0; top: 0; width: 39%; height: 100%; }
.start { width: 46px; display: grid; place-items: center; padding-right: 4px; }
.start svg { width: 24px; height: 22px; }
.app { width: 49px; margin-right: 3px; border: 1px solid #9a9084; background: #776b60; display: grid; place-items: center; }
.app svg { width: 28px; height: 28px; }
.plain { border-color: transparent; background: none; margin-right: 1px; }
.act { background: #a79f97; border-color: #ddd; }
.line { background: linear-gradient(#e3d24c, #e2953d); border-color: #f0dc9c; }
.linetxt { font: 700 6px "Liberation Sans", sans-serif; fill: #0dbb12; }
.tray { margin-left: auto; display: flex; align-items: center; gap: 4px; padding: 2px 8px 0 0; position: relative; color: #fff; }
.up { width: 6px; height: 4px; margin-right: 9px; background: #fff; clip-path: polygon(50% 0, 100% 100%, 0 100%); }
.lang { margin: 0 4px 0 5px; }
.clock { display: flex; flex-direction: column; align-items: center; line-height: 14px; }
```
